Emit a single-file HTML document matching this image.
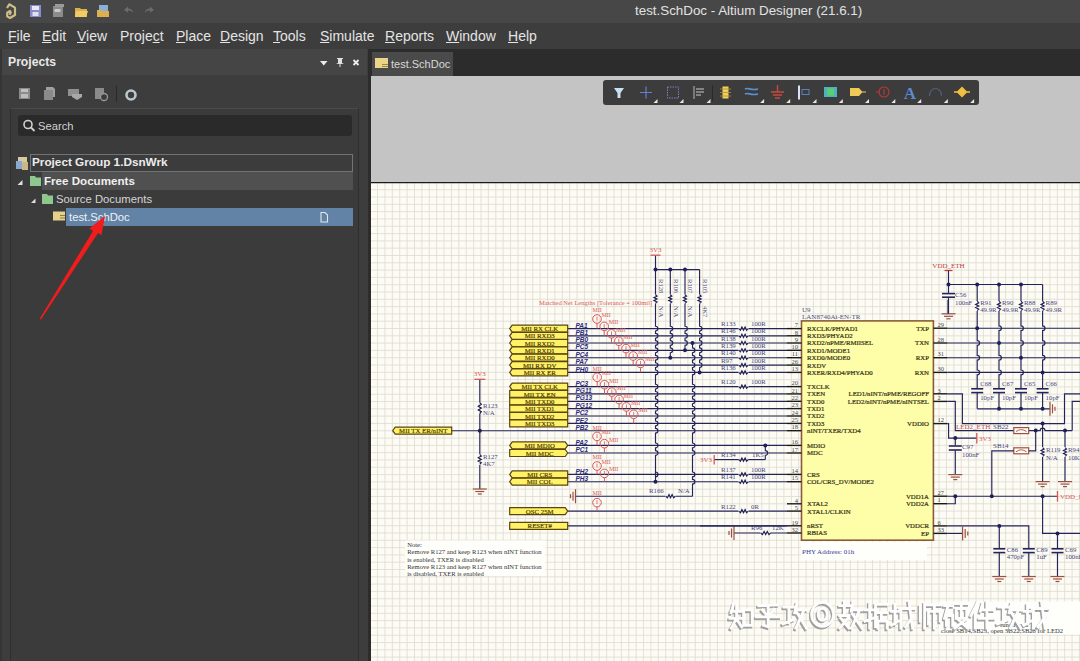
<!DOCTYPE html>
<html><head><meta charset="utf-8"><style>
*{margin:0;padding:0;box-sizing:border-box}
html,body{width:1080px;height:661px;overflow:hidden;background:#2c2c2c;font-family:"Liberation Sans",sans-serif}
.abs{position:absolute}
#title{left:0;top:0;width:1080px;height:23px;background:#474747}
#menu{left:0;top:23px;width:1080px;height:26px;background:#3d3d3d}
.mi{position:absolute;top:4px;font-size:14px;color:#e4e4e4;letter-spacing:0px;white-space:nowrap}
.mi u{text-decoration:underline;text-decoration-thickness:1px;text-underline-offset:0.5px}
#panel{left:0;top:49px;width:368px;height:612px;background:#3d3d3d;border-left:2px solid #353535}
#phead{left:2px;top:49px;width:365px;height:26px;background:#454545}
#ptool{left:2px;top:75px;width:365px;height:33px;background:#3d3d3d}
#tree{left:10px;top:108px;width:349px;height:553px;background:#3b3b3b;border-left:1px solid #2e2e2e;border-right:1px solid #2e2e2e;border-top:1px solid #4a4a4a}
#search{left:18px;top:115px;width:334px;height:21px;background:#2a2a2a;border-radius:3px}
#docarea{left:368px;top:49px;width:712px;height:612px;background:#2c2c2c}
#tab{left:372px;top:52px;width:81px;height:24px;background:#4a4a4a}
#canvas{left:371px;top:76px;width:709px;height:585px;background:#c4c4c4}
#stb{left:603px;top:80px;width:376px;height:25px;background:#3c3c3c;border-radius:3px}
</style></head><body>
<div id="title" class="abs"></div>
<div id="menu" class="abs"></div>
<div id="panel" class="abs"></div>
<div id="phead" class="abs"></div>
<div id="ptool" class="abs"></div>
<div id="tree" class="abs"></div>
<div id="search" class="abs"></div>
<div id="docarea" class="abs"></div>
<div id="tab" class="abs"></div>
<div id="canvas" class="abs"></div>
<div id="stb" class="abs"></div>
<svg class="abs" style="left:0;top:0" width="1080" height="661" viewBox="0 0 1080 661">
<defs><clipPath id="sheet"><rect x="371" y="182" width="709" height="479"/></clipPath></defs>
<g clip-path="url(#sheet)">
<rect x="371" y="182.4" width="709" height="478.6" fill="#fdfcf4"/>
<path d="M377.56,182.4 V661 M384.95,182.4 V661 M392.34,182.4 V661 M399.73,182.4 V661 M407.11,182.4 V661 M414.50,182.4 V661 M421.89,182.4 V661 M429.28,182.4 V661 M436.67,182.4 V661 M444.06,182.4 V661 M451.45,182.4 V661 M458.83,182.4 V661 M466.22,182.4 V661 M473.61,182.4 V661 M481.00,182.4 V661 M488.39,182.4 V661 M495.78,182.4 V661 M503.16,182.4 V661 M510.55,182.4 V661 M517.94,182.4 V661 M525.33,182.4 V661 M532.72,182.4 V661 M540.11,182.4 V661 M547.50,182.4 V661 M554.88,182.4 V661 M562.27,182.4 V661 M569.66,182.4 V661 M577.05,182.4 V661 M584.44,182.4 V661 M591.83,182.4 V661 M599.22,182.4 V661 M606.60,182.4 V661 M613.99,182.4 V661 M621.38,182.4 V661 M628.77,182.4 V661 M636.16,182.4 V661 M643.55,182.4 V661 M650.93,182.4 V661 M658.32,182.4 V661 M665.71,182.4 V661 M673.10,182.4 V661 M680.49,182.4 V661 M687.88,182.4 V661 M695.27,182.4 V661 M702.65,182.4 V661 M710.04,182.4 V661 M717.43,182.4 V661 M724.82,182.4 V661 M732.21,182.4 V661 M739.60,182.4 V661 M746.99,182.4 V661 M754.37,182.4 V661 M761.76,182.4 V661 M769.15,182.4 V661 M776.54,182.4 V661 M783.93,182.4 V661 M791.32,182.4 V661 M798.70,182.4 V661 M806.09,182.4 V661 M813.48,182.4 V661 M820.87,182.4 V661 M828.26,182.4 V661 M835.65,182.4 V661 M843.04,182.4 V661 M850.42,182.4 V661 M857.81,182.4 V661 M865.20,182.4 V661 M872.59,182.4 V661 M879.98,182.4 V661 M887.37,182.4 V661 M894.76,182.4 V661 M902.14,182.4 V661 M909.53,182.4 V661 M916.92,182.4 V661 M924.31,182.4 V661 M931.70,182.4 V661 M939.09,182.4 V661 M946.47,182.4 V661 M953.86,182.4 V661 M961.25,182.4 V661 M968.64,182.4 V661 M976.03,182.4 V661 M983.42,182.4 V661 M990.81,182.4 V661 M998.19,182.4 V661 M1005.58,182.4 V661 M1012.97,182.4 V661 M1020.36,182.4 V661 M1027.75,182.4 V661 M1035.14,182.4 V661 M1042.53,182.4 V661 M1049.91,182.4 V661 M1057.30,182.4 V661 M1064.69,182.4 V661 M1072.08,182.4 V661 M1079.47,182.4 V661 M371,189.75 H1080 M371,197.05 H1080 M371,204.36 H1080 M371,211.66 H1080 M371,218.96 H1080 M371,226.26 H1080 M371,233.57 H1080 M371,240.87 H1080 M371,248.17 H1080 M371,255.48 H1080 M371,262.78 H1080 M371,270.08 H1080 M371,277.39 H1080 M371,284.69 H1080 M371,291.99 H1080 M371,299.29 H1080 M371,306.60 H1080 M371,313.90 H1080 M371,321.20 H1080 M371,328.51 H1080 M371,335.81 H1080 M371,343.11 H1080 M371,350.42 H1080 M371,357.72 H1080 M371,365.02 H1080 M371,372.32 H1080 M371,379.63 H1080 M371,386.93 H1080 M371,394.23 H1080 M371,401.54 H1080 M371,408.84 H1080 M371,416.14 H1080 M371,423.45 H1080 M371,430.75 H1080 M371,438.05 H1080 M371,445.35 H1080 M371,452.66 H1080 M371,459.96 H1080 M371,467.26 H1080 M371,474.57 H1080 M371,481.87 H1080 M371,489.17 H1080 M371,496.48 H1080 M371,503.78 H1080 M371,511.08 H1080 M371,518.38 H1080 M371,525.69 H1080 M371,532.99 H1080 M371,540.29 H1080 M371,547.60 H1080 M371,554.90 H1080 M371,562.20 H1080 M371,569.51 H1080 M371,576.81 H1080 M371,584.11 H1080 M371,591.41 H1080 M371,598.72 H1080 M371,606.02 H1080 M371,613.32 H1080 M371,620.63 H1080 M371,627.93 H1080 M371,635.23 H1080 M371,642.54 H1080 M371,649.84 H1080 M371,657.14 H1080" stroke="#dfdcd2" stroke-width="0.85" fill="none"/>
<rect x="405" y="540.5" width="140.5" height="35.5" fill="#fefefb"/>
<rect x="801" y="542" width="126" height="18" fill="#fefefb"/>
<rect x="939" y="601.5" width="141" height="33" fill="#fefefb"/>
<line x1="371.0" y1="182.4" x2="1080.0" y2="182.4" stroke="#1a1a1a" stroke-width="1.6"/>
<line x1="567.7" y1="328.6" x2="787.0" y2="328.6" stroke="#24245a" stroke-width="1.15"/>
<line x1="567.7" y1="335.8" x2="787.0" y2="335.8" stroke="#24245a" stroke-width="1.15"/>
<line x1="567.7" y1="343.0" x2="787.0" y2="343.0" stroke="#24245a" stroke-width="1.15"/>
<line x1="567.7" y1="350.3" x2="787.0" y2="350.3" stroke="#24245a" stroke-width="1.15"/>
<line x1="567.7" y1="357.7" x2="787.0" y2="357.7" stroke="#24245a" stroke-width="1.15"/>
<line x1="567.7" y1="365.1" x2="787.0" y2="365.1" stroke="#24245a" stroke-width="1.15"/>
<line x1="567.7" y1="372.4" x2="787.0" y2="372.4" stroke="#24245a" stroke-width="1.15"/>
<line x1="567.7" y1="386.6" x2="787.0" y2="386.6" stroke="#24245a" stroke-width="1.15"/>
<line x1="567.7" y1="393.9" x2="787.0" y2="393.9" stroke="#24245a" stroke-width="1.15"/>
<line x1="567.7" y1="401.3" x2="787.0" y2="401.3" stroke="#24245a" stroke-width="1.15"/>
<line x1="567.7" y1="408.6" x2="787.0" y2="408.6" stroke="#24245a" stroke-width="1.15"/>
<line x1="567.7" y1="416.0" x2="787.0" y2="416.0" stroke="#24245a" stroke-width="1.15"/>
<line x1="567.7" y1="423.4" x2="787.0" y2="423.4" stroke="#24245a" stroke-width="1.15"/>
<line x1="567.7" y1="445.4" x2="787.0" y2="445.4" stroke="#24245a" stroke-width="1.15"/>
<line x1="567.7" y1="453.0" x2="787.0" y2="453.0" stroke="#24245a" stroke-width="1.15"/>
<line x1="567.7" y1="474.4" x2="787.0" y2="474.4" stroke="#24245a" stroke-width="1.15"/>
<line x1="567.7" y1="481.7" x2="787.0" y2="481.7" stroke="#24245a" stroke-width="1.15"/>
<line x1="451.7" y1="430.7" x2="787.0" y2="430.7" stroke="#24245a" stroke-width="1.15"/>
<line x1="567.7" y1="511.1" x2="787.0" y2="511.1" stroke="#24245a" stroke-width="1.15"/>
<line x1="567.7" y1="525.8" x2="787.0" y2="525.8" stroke="#24245a" stroke-width="1.15"/>
<line x1="575.5" y1="496.2" x2="692.5" y2="496.2" stroke="#24245a" stroke-width="1.15"/>
<rect x="738.5" y="327.4" width="10" height="2.4" fill="#fdfcf4"/>
<polyline points="738.8,328.6 740.4,330.1 741.9,327.1 743.5,330.1 745.1,327.1 746.6,330.1 748.2,328.6" fill="none" stroke="#24245a" stroke-width="1.25"/>
<text x="721.0" y="326.1" font-family="Liberation Serif" font-size="6.8" fill="#484880" text-anchor="start" font-weight="normal" font-style="normal">R133</text>
<text x="751.0" y="326.1" font-family="Liberation Serif" font-size="6.8" fill="#484880" text-anchor="start" font-weight="normal" font-style="normal">100R</text>
<rect x="738.5" y="334.6" width="10" height="2.4" fill="#fdfcf4"/>
<polyline points="738.8,335.8 740.4,337.3 741.9,334.3 743.5,337.3 745.1,334.3 746.6,337.3 748.2,335.8" fill="none" stroke="#24245a" stroke-width="1.25"/>
<text x="721.0" y="333.3" font-family="Liberation Serif" font-size="6.8" fill="#484880" text-anchor="start" font-weight="normal" font-style="normal">R146</text>
<text x="751.0" y="333.3" font-family="Liberation Serif" font-size="6.8" fill="#484880" text-anchor="start" font-weight="normal" font-style="normal">100R</text>
<rect x="738.5" y="341.8" width="10" height="2.4" fill="#fdfcf4"/>
<polyline points="738.8,343.0 740.4,344.5 741.9,341.5 743.5,344.5 745.1,341.5 746.6,344.5 748.2,343.0" fill="none" stroke="#24245a" stroke-width="1.25"/>
<text x="721.0" y="340.5" font-family="Liberation Serif" font-size="6.8" fill="#484880" text-anchor="start" font-weight="normal" font-style="normal">R138</text>
<text x="751.0" y="340.5" font-family="Liberation Serif" font-size="6.8" fill="#484880" text-anchor="start" font-weight="normal" font-style="normal">100R</text>
<rect x="738.5" y="349.1" width="10" height="2.4" fill="#fdfcf4"/>
<polyline points="738.8,350.3 740.4,351.8 741.9,348.8 743.5,351.8 745.1,348.8 746.6,351.8 748.2,350.3" fill="none" stroke="#24245a" stroke-width="1.25"/>
<text x="721.0" y="347.8" font-family="Liberation Serif" font-size="6.8" fill="#484880" text-anchor="start" font-weight="normal" font-style="normal">R139</text>
<text x="751.0" y="347.8" font-family="Liberation Serif" font-size="6.8" fill="#484880" text-anchor="start" font-weight="normal" font-style="normal">100R</text>
<rect x="738.5" y="356.5" width="10" height="2.4" fill="#fdfcf4"/>
<polyline points="738.8,357.7 740.4,359.2 741.9,356.2 743.5,359.2 745.1,356.2 746.6,359.2 748.2,357.7" fill="none" stroke="#24245a" stroke-width="1.25"/>
<text x="721.0" y="355.2" font-family="Liberation Serif" font-size="6.8" fill="#484880" text-anchor="start" font-weight="normal" font-style="normal">R140</text>
<text x="751.0" y="355.2" font-family="Liberation Serif" font-size="6.8" fill="#484880" text-anchor="start" font-weight="normal" font-style="normal">100R</text>
<rect x="738.5" y="363.9" width="10" height="2.4" fill="#fdfcf4"/>
<polyline points="738.8,365.1 740.4,366.6 741.9,363.6 743.5,366.6 745.1,363.6 746.6,366.6 748.2,365.1" fill="none" stroke="#24245a" stroke-width="1.25"/>
<text x="721.0" y="362.6" font-family="Liberation Serif" font-size="6.8" fill="#484880" text-anchor="start" font-weight="normal" font-style="normal">R97</text>
<text x="751.0" y="362.6" font-family="Liberation Serif" font-size="6.8" fill="#484880" text-anchor="start" font-weight="normal" font-style="normal">100R</text>
<rect x="738.5" y="371.2" width="10" height="2.4" fill="#fdfcf4"/>
<polyline points="738.8,372.4 740.4,373.9 741.9,370.9 743.5,373.9 745.1,370.9 746.6,373.9 748.2,372.4" fill="none" stroke="#24245a" stroke-width="1.25"/>
<text x="721.0" y="369.9" font-family="Liberation Serif" font-size="6.8" fill="#484880" text-anchor="start" font-weight="normal" font-style="normal">R136</text>
<text x="751.0" y="369.9" font-family="Liberation Serif" font-size="6.8" fill="#484880" text-anchor="start" font-weight="normal" font-style="normal">100R</text>
<rect x="738.5" y="385.4" width="10" height="2.4" fill="#fdfcf4"/>
<polyline points="738.8,386.6 740.4,388.1 741.9,385.1 743.5,388.1 745.1,385.1 746.6,388.1 748.2,386.6" fill="none" stroke="#24245a" stroke-width="1.25"/>
<text x="721.0" y="384.1" font-family="Liberation Serif" font-size="6.8" fill="#484880" text-anchor="start" font-weight="normal" font-style="normal">R120</text>
<text x="751.0" y="384.1" font-family="Liberation Serif" font-size="6.8" fill="#484880" text-anchor="start" font-weight="normal" font-style="normal">100R</text>
<rect x="738.5" y="473.2" width="10" height="2.4" fill="#fdfcf4"/>
<polyline points="738.8,474.4 740.4,475.9 741.9,472.9 743.5,475.9 745.1,472.9 746.6,475.9 748.2,474.4" fill="none" stroke="#24245a" stroke-width="1.25"/>
<text x="721.0" y="471.9" font-family="Liberation Serif" font-size="6.8" fill="#484880" text-anchor="start" font-weight="normal" font-style="normal">R137</text>
<text x="751.0" y="471.9" font-family="Liberation Serif" font-size="6.8" fill="#484880" text-anchor="start" font-weight="normal" font-style="normal">100R</text>
<rect x="738.5" y="480.5" width="10" height="2.4" fill="#fdfcf4"/>
<polyline points="738.8,481.7 740.4,483.2 741.9,480.2 743.5,483.2 745.1,480.2 746.6,483.2 748.2,481.7" fill="none" stroke="#24245a" stroke-width="1.25"/>
<text x="721.0" y="479.2" font-family="Liberation Serif" font-size="6.8" fill="#484880" text-anchor="start" font-weight="normal" font-style="normal">R141</text>
<text x="751.0" y="479.2" font-family="Liberation Serif" font-size="6.8" fill="#484880" text-anchor="start" font-weight="normal" font-style="normal">100R</text>
<rect x="738.5" y="509.9" width="10" height="2.4" fill="#fdfcf4"/>
<polyline points="738.8,511.1 740.4,512.6 741.9,509.6 743.5,512.6 745.1,509.6 746.6,512.6 748.2,511.1" fill="none" stroke="#24245a" stroke-width="1.25"/>
<text x="721.0" y="508.6" font-family="Liberation Serif" font-size="6.8" fill="#484880" text-anchor="start" font-weight="normal" font-style="normal">R122</text>
<text x="751.0" y="508.6" font-family="Liberation Serif" font-size="6.8" fill="#484880" text-anchor="start" font-weight="normal" font-style="normal">0R</text>
<rect x="665.5" y="495.0" width="10" height="2.4" fill="#fdfcf4"/>
<polyline points="665.8,496.2 667.4,497.7 669.0,494.7 670.5,497.7 672.1,494.7 673.7,497.7 675.3,496.2" fill="none" stroke="#24245a" stroke-width="1.25"/>
<text x="649.0" y="493.2" font-family="Liberation Serif" font-size="6.8" fill="#484880" text-anchor="start" font-weight="normal" font-style="normal">R166</text>
<text x="678.0" y="493.2" font-family="Liberation Serif" font-size="6.8" fill="#484880" text-anchor="start" font-weight="normal" font-style="normal">N/A</text>
<line x1="575.5" y1="489.2" x2="575.5" y2="503.2" stroke="#9a5040" stroke-width="1.2"/>
<line x1="573.0" y1="491.7" x2="573.0" y2="500.7" stroke="#9a5040" stroke-width="1.2"/>
<line x1="570.5" y1="494.2" x2="570.5" y2="498.2" stroke="#9a5040" stroke-width="1.2"/>
<polyline points="714.2,459.6 738.8,459.6" fill="none" stroke="#24245a" stroke-width="1.15"/>
<polyline points="738.8,459.6 740.4,461.1 741.9,458.1 743.5,461.1 745.1,458.1 746.6,461.1 748.2,459.6" fill="none" stroke="#24245a" stroke-width="1.25"/>
<polyline points="748.2,459.6 765.3,459.6" fill="none" stroke="#24245a" stroke-width="1.15"/>
<path d="M765.3,445.4 L765.3,450.6 A2.4,2.4 0 0 1 765.3,455.4 L765.3,459.6" fill="none" stroke="#24245a" stroke-width="1.15"/>
<circle cx="765.3" cy="445.4" r="2.0" fill="#1e1e5a"/>
<text x="721.0" y="457.0" font-family="Liberation Serif" font-size="6.8" fill="#484880" text-anchor="start" font-weight="normal" font-style="normal">R134</text>
<text x="752.0" y="457.0" font-family="Liberation Serif" font-size="6.8" fill="#484880" text-anchor="start" font-weight="normal" font-style="normal">1K5</text>
<line x1="714.2" y1="455.0" x2="714.2" y2="464.5" stroke="#d85858" stroke-width="1.3"/>
<text x="712.0" y="462.3" font-family="Liberation Serif" font-size="7" fill="#d85858" text-anchor="end" font-weight="normal" font-style="normal">3V3</text>
<line x1="734.0" y1="533.0" x2="787.0" y2="533.0" stroke="#24245a" stroke-width="1.15"/>
<rect x="760.5" y="531.8" width="10" height="2.4" fill="#fdfcf4"/>
<polyline points="760.8,533.0 762.4,534.5 764.1,531.5 765.7,534.5 767.3,531.5 769.0,534.5 770.6,533.0" fill="none" stroke="#24245a" stroke-width="1.25"/>
<text x="751.0" y="530.0" font-family="Liberation Serif" font-size="6.8" fill="#484880" text-anchor="start" font-weight="normal" font-style="normal">R96</text>
<text x="772.0" y="530.0" font-family="Liberation Serif" font-size="6.8" fill="#484880" text-anchor="start" font-weight="normal" font-style="normal">12K</text>
<line x1="734.0" y1="526.0" x2="734.0" y2="540.0" stroke="#9a5040" stroke-width="1.2"/>
<line x1="731.5" y1="528.5" x2="731.5" y2="537.5" stroke="#9a5040" stroke-width="1.2"/>
<line x1="729.0" y1="531.0" x2="729.0" y2="535.0" stroke="#9a5040" stroke-width="1.2"/>
<line x1="700.0" y1="525.8" x2="787.0" y2="525.8" stroke="#24245a" stroke-width="1.15"/>
<path d="M655.5,255.2 L655.5,326.2 A2.4,2.4 0 0 1 655.5,331.0 L655.5,333.4 A2.4,2.4 0 0 1 655.5,338.2 L655.5,340.6 A2.4,2.4 0 0 1 655.5,345.4 L655.5,347.9 A2.4,2.4 0 0 1 655.5,352.7 L655.5,355.3 A2.4,2.4 0 0 1 655.5,360.1 L655.5,362.7 A2.4,2.4 0 0 1 655.5,367.5 L655.5,370.0 A2.4,2.4 0 0 1 655.5,374.8 L655.5,384.2 A2.4,2.4 0 0 1 655.5,389.0 L655.5,391.5 A2.4,2.4 0 0 1 655.5,396.3 L655.5,398.9 A2.4,2.4 0 0 1 655.5,403.7 L655.5,406.2 A2.4,2.4 0 0 1 655.5,411.0 L655.5,413.6 A2.4,2.4 0 0 1 655.5,418.4 L655.5,421.0 A2.4,2.4 0 0 1 655.5,425.8 L655.5,428.3 A2.4,2.4 0 0 1 655.5,433.1 L655.5,443.0 A2.4,2.4 0 0 1 655.5,447.8 L655.5,450.6 A2.4,2.4 0 0 1 655.5,455.4 L655.5,472.0 A2.4,2.4 0 0 1 655.5,476.8 L655.5,472.0 A2.4,2.4 0 0 1 655.5,476.8 L655.5,481.7" fill="none" stroke="#24245a" stroke-width="1.15"/>
<circle cx="655.5" cy="269.6" r="2.0" fill="#1e1e5a"/>
<circle cx="655.5" cy="481.7" r="2.0" fill="#1e1e5a"/>
<line x1="655.5" y1="269.6" x2="699.6" y2="269.6" stroke="#24245a" stroke-width="1.15"/>
<path d="M670.3,269.6 L670.3,326.2 A2.4,2.4 0 0 1 670.3,331.0 L670.3,333.4 A2.4,2.4 0 0 1 670.3,338.2 L670.3,340.6 A2.4,2.4 0 0 1 670.3,345.4 L670.3,347.9 A2.4,2.4 0 0 1 670.3,352.7 L670.3,357.7" fill="none" stroke="#24245a" stroke-width="1.15"/>
<circle cx="670.3" cy="269.6" r="2.0" fill="#1e1e5a"/>
<circle cx="670.3" cy="357.7" r="2.0" fill="#1e1e5a"/>
<path d="M685.0,269.6 L685.0,326.2 A2.4,2.4 0 0 1 685.0,331.0 L685.0,333.4 A2.4,2.4 0 0 1 685.0,338.2 L685.0,340.6 A2.4,2.4 0 0 1 685.0,345.4 L685.0,350.3" fill="none" stroke="#24245a" stroke-width="1.15"/>
<circle cx="685.0" cy="269.6" r="2.0" fill="#1e1e5a"/>
<circle cx="685.0" cy="350.3" r="2.0" fill="#1e1e5a"/>
<path d="M699.6,269.6 L699.6,326.2 A2.4,2.4 0 0 1 699.6,331.0 L699.6,333.4 A2.4,2.4 0 0 1 699.6,338.2 L699.6,340.6 A2.4,2.4 0 0 1 699.6,345.4 L699.6,347.9 A2.4,2.4 0 0 1 699.6,352.7 L699.6,355.3 A2.4,2.4 0 0 1 699.6,360.1 L699.6,362.7 A2.4,2.4 0 0 1 699.6,367.5 L699.6,372.4" fill="none" stroke="#24245a" stroke-width="1.15"/>
<circle cx="699.6" cy="372.4" r="2.0" fill="#1e1e5a"/>
<path d="M692.5,343.0 L692.5,347.9 A2.4,2.4 0 0 1 692.5,352.7 L692.5,355.3 A2.4,2.4 0 0 1 692.5,360.1 L692.5,362.7 A2.4,2.4 0 0 1 692.5,367.5 L692.5,370.0 A2.4,2.4 0 0 1 692.5,374.8 L692.5,384.2 A2.4,2.4 0 0 1 692.5,389.0 L692.5,391.5 A2.4,2.4 0 0 1 692.5,396.3 L692.5,398.9 A2.4,2.4 0 0 1 692.5,403.7 L692.5,406.2 A2.4,2.4 0 0 1 692.5,411.0 L692.5,413.6 A2.4,2.4 0 0 1 692.5,418.4 L692.5,421.0 A2.4,2.4 0 0 1 692.5,425.8 L692.5,428.3 A2.4,2.4 0 0 1 692.5,433.1 L692.5,443.0 A2.4,2.4 0 0 1 692.5,447.8 L692.5,450.6 A2.4,2.4 0 0 1 692.5,455.4 L692.5,472.0 A2.4,2.4 0 0 1 692.5,476.8 L692.5,479.3 A2.4,2.4 0 0 1 692.5,484.1 L692.5,496.2" fill="none" stroke="#24245a" stroke-width="1.15"/>
<circle cx="692.5" cy="343.0" r="2.0" fill="#1e1e5a"/>
<rect x="652.5" y="294.5" width="6" height="9" fill="#fdfcf4"/>
<polyline points="655.5,294.8 657.0,296.2 654.0,297.6 657.0,299.1 654.0,300.5 657.0,301.9 655.5,303.3" fill="none" stroke="#24245a" stroke-width="1.25"/>
<text x="658.7" y="279.0" font-family="Liberation Serif" font-size="6.6" fill="#484880" text-anchor="start" font-weight="normal" font-style="normal" transform="rotate(90 658.7 279.0)">R128</text>
<text x="658.7" y="306.0" font-family="Liberation Serif" font-size="6.6" fill="#484880" text-anchor="start" font-weight="normal" font-style="normal" transform="rotate(90 658.7 306.0)">N/A</text>
<rect x="667.3" y="294.5" width="6" height="9" fill="#fdfcf4"/>
<polyline points="670.3,294.8 671.8,296.2 668.8,297.6 671.8,299.1 668.8,300.5 671.8,301.9 670.3,303.3" fill="none" stroke="#24245a" stroke-width="1.25"/>
<text x="673.5" y="279.0" font-family="Liberation Serif" font-size="6.6" fill="#484880" text-anchor="start" font-weight="normal" font-style="normal" transform="rotate(90 673.5 279.0)">R106</text>
<text x="673.5" y="306.0" font-family="Liberation Serif" font-size="6.6" fill="#484880" text-anchor="start" font-weight="normal" font-style="normal" transform="rotate(90 673.5 306.0)">N/A</text>
<rect x="682.0" y="294.5" width="6" height="9" fill="#fdfcf4"/>
<polyline points="685.0,294.8 686.5,296.2 683.5,297.6 686.5,299.1 683.5,300.5 686.5,301.9 685.0,303.3" fill="none" stroke="#24245a" stroke-width="1.25"/>
<text x="688.2" y="279.0" font-family="Liberation Serif" font-size="6.6" fill="#484880" text-anchor="start" font-weight="normal" font-style="normal" transform="rotate(90 688.2 279.0)">R107</text>
<text x="688.2" y="306.0" font-family="Liberation Serif" font-size="6.6" fill="#484880" text-anchor="start" font-weight="normal" font-style="normal" transform="rotate(90 688.2 306.0)">N/A</text>
<rect x="696.6" y="294.5" width="6" height="9" fill="#fdfcf4"/>
<polyline points="699.6,294.8 701.1,296.2 698.1,297.6 701.1,299.1 698.1,300.5 701.1,301.9 699.6,303.3" fill="none" stroke="#24245a" stroke-width="1.25"/>
<text x="702.8" y="279.0" font-family="Liberation Serif" font-size="6.6" fill="#484880" text-anchor="start" font-weight="normal" font-style="normal" transform="rotate(90 702.8 279.0)">R105</text>
<text x="702.8" y="306.0" font-family="Liberation Serif" font-size="6.6" fill="#484880" text-anchor="start" font-weight="normal" font-style="normal" transform="rotate(90 702.8 306.0)">4K7</text>
<line x1="650.5" y1="255.2" x2="660.5" y2="255.2" stroke="#d85858" stroke-width="1.3"/>
<text x="655.5" y="252.2" font-family="Liberation Serif" font-size="7" fill="#d85858" text-anchor="middle" font-weight="normal" font-style="normal">3V3</text>
<text x="539.0" y="304.5" font-family="Liberation Serif" font-size="6.5" fill="#d85858" text-anchor="start" font-weight="normal" font-style="normal">Matched Net Lengths [Tolerance = 100mil]</text>
<text x="592.5" y="311.5" font-family="Liberation Serif" font-size="6" fill="#d85858" text-anchor="start" font-weight="normal" font-style="normal">MII</text>
<circle cx="597.0" cy="319.0" r="4.3" fill="none" stroke="#d85858" stroke-width="1.0"/>
<line x1="597.0" y1="316.5" x2="597.0" y2="320.5" stroke="#d85858" stroke-width="0.8"/>
<line x1="597.0" y1="323.1" x2="597.0" y2="328.6" stroke="#d85858" stroke-width="1.0"/>
<text x="601.5" y="317.0" font-family="Liberation Serif" font-size="6" fill="#d85858" text-anchor="start" font-weight="normal" font-style="normal">MII</text>
<circle cx="604.2" cy="326.4" r="4.3" fill="none" stroke="#d85858" stroke-width="1.0"/>
<line x1="604.2" y1="323.9" x2="604.2" y2="327.9" stroke="#d85858" stroke-width="0.8"/>
<line x1="604.2" y1="330.5" x2="604.2" y2="335.8" stroke="#d85858" stroke-width="1.0"/>
<text x="608.8" y="324.4" font-family="Liberation Serif" font-size="6" fill="#d85858" text-anchor="start" font-weight="normal" font-style="normal">MII</text>
<circle cx="611.5" cy="333.8" r="4.3" fill="none" stroke="#d85858" stroke-width="1.0"/>
<line x1="611.5" y1="331.3" x2="611.5" y2="335.3" stroke="#d85858" stroke-width="0.8"/>
<line x1="611.5" y1="337.9" x2="611.5" y2="343.0" stroke="#d85858" stroke-width="1.0"/>
<text x="616.0" y="331.8" font-family="Liberation Serif" font-size="6" fill="#d85858" text-anchor="start" font-weight="normal" font-style="normal">MII</text>
<circle cx="618.8" cy="341.2" r="4.3" fill="none" stroke="#d85858" stroke-width="1.0"/>
<line x1="618.8" y1="338.7" x2="618.8" y2="342.7" stroke="#d85858" stroke-width="0.8"/>
<line x1="618.8" y1="345.3" x2="618.8" y2="350.3" stroke="#d85858" stroke-width="1.0"/>
<text x="623.2" y="339.2" font-family="Liberation Serif" font-size="6" fill="#d85858" text-anchor="start" font-weight="normal" font-style="normal">MII</text>
<circle cx="626.0" cy="348.6" r="4.3" fill="none" stroke="#d85858" stroke-width="1.0"/>
<line x1="626.0" y1="346.1" x2="626.0" y2="350.1" stroke="#d85858" stroke-width="0.8"/>
<line x1="626.0" y1="352.7" x2="626.0" y2="357.7" stroke="#d85858" stroke-width="1.0"/>
<text x="630.5" y="346.6" font-family="Liberation Serif" font-size="6" fill="#d85858" text-anchor="start" font-weight="normal" font-style="normal">MII</text>
<circle cx="633.2" cy="356.0" r="4.3" fill="none" stroke="#d85858" stroke-width="1.0"/>
<line x1="633.2" y1="353.5" x2="633.2" y2="357.5" stroke="#d85858" stroke-width="0.8"/>
<line x1="633.2" y1="360.1" x2="633.2" y2="365.1" stroke="#d85858" stroke-width="1.0"/>
<text x="637.8" y="354.0" font-family="Liberation Serif" font-size="6" fill="#d85858" text-anchor="start" font-weight="normal" font-style="normal">MII</text>
<circle cx="640.5" cy="363.4" r="4.3" fill="none" stroke="#d85858" stroke-width="1.0"/>
<line x1="640.5" y1="360.9" x2="640.5" y2="364.9" stroke="#d85858" stroke-width="0.8"/>
<line x1="640.5" y1="367.5" x2="640.5" y2="372.4" stroke="#d85858" stroke-width="1.0"/>
<text x="645.0" y="361.4" font-family="Liberation Serif" font-size="6" fill="#d85858" text-anchor="start" font-weight="normal" font-style="normal">MII</text>
<text x="592.5" y="370.5" font-family="Liberation Serif" font-size="6" fill="#d85858" text-anchor="start" font-weight="normal" font-style="normal">MII</text>
<circle cx="597.2" cy="377.3" r="4.3" fill="none" stroke="#d85858" stroke-width="1.0"/>
<line x1="597.2" y1="374.8" x2="597.2" y2="378.8" stroke="#d85858" stroke-width="0.8"/>
<line x1="597.2" y1="381.4" x2="597.2" y2="386.6" stroke="#d85858" stroke-width="1.0"/>
<text x="601.7" y="375.3" font-family="Liberation Serif" font-size="6" fill="#d85858" text-anchor="start" font-weight="normal" font-style="normal">MII</text>
<circle cx="604.5" cy="384.7" r="4.3" fill="none" stroke="#d85858" stroke-width="1.0"/>
<line x1="604.5" y1="382.2" x2="604.5" y2="386.2" stroke="#d85858" stroke-width="0.8"/>
<line x1="604.5" y1="388.8" x2="604.5" y2="393.9" stroke="#d85858" stroke-width="1.0"/>
<text x="609.0" y="382.7" font-family="Liberation Serif" font-size="6" fill="#d85858" text-anchor="start" font-weight="normal" font-style="normal">MII</text>
<circle cx="611.8" cy="392.1" r="4.3" fill="none" stroke="#d85858" stroke-width="1.0"/>
<line x1="611.8" y1="389.6" x2="611.8" y2="393.6" stroke="#d85858" stroke-width="0.8"/>
<line x1="611.8" y1="396.2" x2="611.8" y2="401.3" stroke="#d85858" stroke-width="1.0"/>
<text x="616.3" y="390.1" font-family="Liberation Serif" font-size="6" fill="#d85858" text-anchor="start" font-weight="normal" font-style="normal">MII</text>
<circle cx="619.1" cy="399.5" r="4.3" fill="none" stroke="#d85858" stroke-width="1.0"/>
<line x1="619.1" y1="397.0" x2="619.1" y2="401.0" stroke="#d85858" stroke-width="0.8"/>
<line x1="619.1" y1="403.6" x2="619.1" y2="408.6" stroke="#d85858" stroke-width="1.0"/>
<text x="623.6" y="397.5" font-family="Liberation Serif" font-size="6" fill="#d85858" text-anchor="start" font-weight="normal" font-style="normal">MII</text>
<circle cx="626.4" cy="406.9" r="4.3" fill="none" stroke="#d85858" stroke-width="1.0"/>
<line x1="626.4" y1="404.4" x2="626.4" y2="408.4" stroke="#d85858" stroke-width="0.8"/>
<line x1="626.4" y1="411.0" x2="626.4" y2="416.0" stroke="#d85858" stroke-width="1.0"/>
<text x="630.9" y="404.9" font-family="Liberation Serif" font-size="6" fill="#d85858" text-anchor="start" font-weight="normal" font-style="normal">MII</text>
<circle cx="633.7" cy="414.3" r="4.3" fill="none" stroke="#d85858" stroke-width="1.0"/>
<line x1="633.7" y1="411.8" x2="633.7" y2="415.8" stroke="#d85858" stroke-width="0.8"/>
<line x1="633.7" y1="418.4" x2="633.7" y2="423.4" stroke="#d85858" stroke-width="1.0"/>
<text x="638.2" y="412.3" font-family="Liberation Serif" font-size="6" fill="#d85858" text-anchor="start" font-weight="normal" font-style="normal">MII</text>
<text x="592.5" y="429.5" font-family="Liberation Serif" font-size="6" fill="#d85858" text-anchor="start" font-weight="normal" font-style="normal">MII</text>
<circle cx="597.0" cy="436.4" r="4.3" fill="none" stroke="#d85858" stroke-width="1.0"/>
<line x1="597.0" y1="433.9" x2="597.0" y2="437.9" stroke="#d85858" stroke-width="0.8"/>
<line x1="597.0" y1="440.5" x2="597.0" y2="445.4" stroke="#d85858" stroke-width="1.0"/>
<text x="601.5" y="434.4" font-family="Liberation Serif" font-size="6" fill="#d85858" text-anchor="start" font-weight="normal" font-style="normal">MII</text>
<circle cx="604.4" cy="443.7" r="4.3" fill="none" stroke="#d85858" stroke-width="1.0"/>
<line x1="604.4" y1="441.2" x2="604.4" y2="445.2" stroke="#d85858" stroke-width="0.8"/>
<line x1="604.4" y1="447.8" x2="604.4" y2="453.0" stroke="#d85858" stroke-width="1.0"/>
<text x="608.9" y="441.7" font-family="Liberation Serif" font-size="6" fill="#d85858" text-anchor="start" font-weight="normal" font-style="normal">MII</text>
<text x="592.5" y="459.0" font-family="Liberation Serif" font-size="6" fill="#d85858" text-anchor="start" font-weight="normal" font-style="normal">MII</text>
<circle cx="597.0" cy="466.0" r="4.3" fill="none" stroke="#d85858" stroke-width="1.0"/>
<line x1="597.0" y1="463.5" x2="597.0" y2="467.5" stroke="#d85858" stroke-width="0.8"/>
<line x1="597.0" y1="470.1" x2="597.0" y2="474.4" stroke="#d85858" stroke-width="1.0"/>
<text x="601.5" y="464.0" font-family="Liberation Serif" font-size="6" fill="#d85858" text-anchor="start" font-weight="normal" font-style="normal">MII</text>
<circle cx="604.4" cy="473.4" r="4.3" fill="none" stroke="#d85858" stroke-width="1.0"/>
<line x1="604.4" y1="470.9" x2="604.4" y2="474.9" stroke="#d85858" stroke-width="0.8"/>
<line x1="604.4" y1="477.5" x2="604.4" y2="481.7" stroke="#d85858" stroke-width="1.0"/>
<text x="608.9" y="471.4" font-family="Liberation Serif" font-size="6" fill="#d85858" text-anchor="start" font-weight="normal" font-style="normal">MII</text>
<text x="592.5" y="494.5" font-family="Liberation Serif" font-size="6" fill="#d85858" text-anchor="start" font-weight="normal" font-style="normal">MII</text>
<circle cx="597.0" cy="502.6" r="4.3" fill="none" stroke="#d85858" stroke-width="1.0"/>
<line x1="597.0" y1="500.1" x2="597.0" y2="504.1" stroke="#d85858" stroke-width="0.8"/>
<line x1="597.0" y1="506.7" x2="597.0" y2="511.1" stroke="#d85858" stroke-width="1.0"/>
<text x="575.5" y="327.7" font-family="Liberation Sans" font-size="6.5" fill="#2c2c80" text-anchor="start" font-weight="bold" font-style="italic">PA1</text>
<text x="575.5" y="334.9" font-family="Liberation Sans" font-size="6.5" fill="#2c2c80" text-anchor="start" font-weight="bold" font-style="italic">PB1</text>
<text x="575.5" y="342.1" font-family="Liberation Sans" font-size="6.5" fill="#2c2c80" text-anchor="start" font-weight="bold" font-style="italic">PB0</text>
<text x="575.5" y="349.4" font-family="Liberation Sans" font-size="6.5" fill="#2c2c80" text-anchor="start" font-weight="bold" font-style="italic">PC5</text>
<text x="575.5" y="356.8" font-family="Liberation Sans" font-size="6.5" fill="#2c2c80" text-anchor="start" font-weight="bold" font-style="italic">PC4</text>
<text x="575.5" y="364.2" font-family="Liberation Sans" font-size="6.5" fill="#2c2c80" text-anchor="start" font-weight="bold" font-style="italic">PA7</text>
<text x="575.5" y="371.5" font-family="Liberation Sans" font-size="6.5" fill="#2c2c80" text-anchor="start" font-weight="bold" font-style="italic">PH0</text>
<text x="575.5" y="385.7" font-family="Liberation Sans" font-size="6.5" fill="#2c2c80" text-anchor="start" font-weight="bold" font-style="italic">PC3</text>
<text x="575.5" y="393.0" font-family="Liberation Sans" font-size="6.5" fill="#2c2c80" text-anchor="start" font-weight="bold" font-style="italic">PG11</text>
<text x="575.5" y="400.4" font-family="Liberation Sans" font-size="6.5" fill="#2c2c80" text-anchor="start" font-weight="bold" font-style="italic">PG13</text>
<text x="575.5" y="407.7" font-family="Liberation Sans" font-size="6.5" fill="#2c2c80" text-anchor="start" font-weight="bold" font-style="italic">PG12</text>
<text x="575.5" y="415.1" font-family="Liberation Sans" font-size="6.5" fill="#2c2c80" text-anchor="start" font-weight="bold" font-style="italic">PC2</text>
<text x="575.5" y="422.5" font-family="Liberation Sans" font-size="6.5" fill="#2c2c80" text-anchor="start" font-weight="bold" font-style="italic">PE2</text>
<text x="575.5" y="429.8" font-family="Liberation Sans" font-size="6.5" fill="#2c2c80" text-anchor="start" font-weight="bold" font-style="italic">PB2</text>
<text x="575.5" y="444.5" font-family="Liberation Sans" font-size="6.5" fill="#2c2c80" text-anchor="start" font-weight="bold" font-style="italic">PA2</text>
<text x="575.5" y="452.1" font-family="Liberation Sans" font-size="6.5" fill="#2c2c80" text-anchor="start" font-weight="bold" font-style="italic">PC1</text>
<text x="575.5" y="473.5" font-family="Liberation Sans" font-size="6.5" fill="#2c2c80" text-anchor="start" font-weight="bold" font-style="italic">PH2</text>
<text x="575.5" y="480.8" font-family="Liberation Sans" font-size="6.5" fill="#2c2c80" text-anchor="start" font-weight="bold" font-style="italic">PH3</text>
<polygon points="512.2,325.1 567.7,325.1 567.7,328.6 567.7,332.1 512.2,332.1 509.7,328.6" fill="#fff266" stroke="#5a4410" stroke-width="1.2"/>
<text x="539.7" y="331.2" font-family="Liberation Serif" font-size="6.8" fill="#4e3c08" text-anchor="middle" font-weight="normal" font-style="normal" stroke="#4e3c08" stroke-width="0.2">MII RX CLK</text>
<polygon points="512.2,332.3 567.7,332.3 567.7,335.8 567.7,339.3 512.2,339.3 509.7,335.8" fill="#fff266" stroke="#5a4410" stroke-width="1.2"/>
<text x="539.7" y="338.4" font-family="Liberation Serif" font-size="6.8" fill="#4e3c08" text-anchor="middle" font-weight="normal" font-style="normal" stroke="#4e3c08" stroke-width="0.2">MII RXD3</text>
<polygon points="512.2,339.5 567.7,339.5 567.7,343.0 567.7,346.5 512.2,346.5 509.7,343.0" fill="#fff266" stroke="#5a4410" stroke-width="1.2"/>
<text x="539.7" y="345.6" font-family="Liberation Serif" font-size="6.8" fill="#4e3c08" text-anchor="middle" font-weight="normal" font-style="normal" stroke="#4e3c08" stroke-width="0.2">MII RXD2</text>
<polygon points="512.2,346.8 567.7,346.8 567.7,350.3 567.7,353.8 512.2,353.8 509.7,350.3" fill="#fff266" stroke="#5a4410" stroke-width="1.2"/>
<text x="539.7" y="352.9" font-family="Liberation Serif" font-size="6.8" fill="#4e3c08" text-anchor="middle" font-weight="normal" font-style="normal" stroke="#4e3c08" stroke-width="0.2">MII RXD1</text>
<polygon points="512.2,354.2 567.7,354.2 567.7,357.7 567.7,361.2 512.2,361.2 509.7,357.7" fill="#fff266" stroke="#5a4410" stroke-width="1.2"/>
<text x="539.7" y="360.3" font-family="Liberation Serif" font-size="6.8" fill="#4e3c08" text-anchor="middle" font-weight="normal" font-style="normal" stroke="#4e3c08" stroke-width="0.2">MII RXD0</text>
<polygon points="512.2,361.6 567.7,361.6 567.7,365.1 567.7,368.6 512.2,368.6 509.7,365.1" fill="#fff266" stroke="#5a4410" stroke-width="1.2"/>
<text x="539.7" y="367.7" font-family="Liberation Serif" font-size="6.8" fill="#4e3c08" text-anchor="middle" font-weight="normal" font-style="normal" stroke="#4e3c08" stroke-width="0.2">MII RX DV</text>
<polygon points="512.2,368.9 567.7,368.9 567.7,372.4 567.7,375.9 512.2,375.9 509.7,372.4" fill="#fff266" stroke="#5a4410" stroke-width="1.2"/>
<text x="539.7" y="375.0" font-family="Liberation Serif" font-size="6.8" fill="#4e3c08" text-anchor="middle" font-weight="normal" font-style="normal" stroke="#4e3c08" stroke-width="0.2">MII RX ER</text>
<polygon points="512.2,383.1 567.7,383.1 567.7,386.6 567.7,390.1 512.2,390.1 509.7,386.6" fill="#fff266" stroke="#5a4410" stroke-width="1.2"/>
<text x="539.7" y="389.2" font-family="Liberation Serif" font-size="6.8" fill="#4e3c08" text-anchor="middle" font-weight="normal" font-style="normal" stroke="#4e3c08" stroke-width="0.2">MII TX CLK</text>
<polygon points="509.7,390.4 567.7,390.4 567.7,393.9 567.7,397.4 509.7,397.4 509.7,393.9" fill="#fff266" stroke="#5a4410" stroke-width="1.2"/>
<text x="539.7" y="396.5" font-family="Liberation Serif" font-size="6.8" fill="#4e3c08" text-anchor="middle" font-weight="normal" font-style="normal" stroke="#4e3c08" stroke-width="0.2">MII TX EN</text>
<polygon points="509.7,397.8 567.7,397.8 567.7,401.3 567.7,404.8 509.7,404.8 509.7,401.3" fill="#fff266" stroke="#5a4410" stroke-width="1.2"/>
<text x="539.7" y="403.9" font-family="Liberation Serif" font-size="6.8" fill="#4e3c08" text-anchor="middle" font-weight="normal" font-style="normal" stroke="#4e3c08" stroke-width="0.2">MII TXD0</text>
<polygon points="509.7,405.1 567.7,405.1 567.7,408.6 567.7,412.1 509.7,412.1 509.7,408.6" fill="#fff266" stroke="#5a4410" stroke-width="1.2"/>
<text x="539.7" y="411.2" font-family="Liberation Serif" font-size="6.8" fill="#4e3c08" text-anchor="middle" font-weight="normal" font-style="normal" stroke="#4e3c08" stroke-width="0.2">MII TXD1</text>
<polygon points="509.7,412.5 567.7,412.5 567.7,416.0 567.7,419.5 509.7,419.5 509.7,416.0" fill="#fff266" stroke="#5a4410" stroke-width="1.2"/>
<text x="539.7" y="418.6" font-family="Liberation Serif" font-size="6.8" fill="#4e3c08" text-anchor="middle" font-weight="normal" font-style="normal" stroke="#4e3c08" stroke-width="0.2">MII TXD2</text>
<polygon points="509.7,419.9 567.7,419.9 567.7,423.4 567.7,426.9 509.7,426.9 509.7,423.4" fill="#fff266" stroke="#5a4410" stroke-width="1.2"/>
<text x="539.7" y="426.0" font-family="Liberation Serif" font-size="6.8" fill="#4e3c08" text-anchor="middle" font-weight="normal" font-style="normal" stroke="#4e3c08" stroke-width="0.2">MII TXD3</text>
<polygon points="512.2,441.9 565.2,441.9 567.7,445.4 565.2,448.9 512.2,448.9 509.7,445.4" fill="#fff266" stroke="#5a4410" stroke-width="1.2"/>
<text x="539.7" y="448.0" font-family="Liberation Serif" font-size="6.8" fill="#4e3c08" text-anchor="middle" font-weight="normal" font-style="normal" stroke="#4e3c08" stroke-width="0.2">MII MDIO</text>
<polygon points="509.7,449.5 565.2,449.5 567.7,453.0 565.2,456.5 509.7,456.5 509.7,453.0" fill="#fff266" stroke="#5a4410" stroke-width="1.2"/>
<text x="539.7" y="455.6" font-family="Liberation Serif" font-size="6.8" fill="#4e3c08" text-anchor="middle" font-weight="normal" font-style="normal" stroke="#4e3c08" stroke-width="0.2">MII MDC</text>
<polygon points="512.2,470.9 567.7,470.9 567.7,474.4 567.7,477.9 512.2,477.9 509.7,474.4" fill="#fff266" stroke="#5a4410" stroke-width="1.2"/>
<text x="539.7" y="477.0" font-family="Liberation Serif" font-size="6.8" fill="#4e3c08" text-anchor="middle" font-weight="normal" font-style="normal" stroke="#4e3c08" stroke-width="0.2">MII CRS</text>
<polygon points="512.2,478.2 567.7,478.2 567.7,481.7 567.7,485.2 512.2,485.2 509.7,481.7" fill="#fff266" stroke="#5a4410" stroke-width="1.2"/>
<text x="539.7" y="484.3" font-family="Liberation Serif" font-size="6.8" fill="#4e3c08" text-anchor="middle" font-weight="normal" font-style="normal" stroke="#4e3c08" stroke-width="0.2">MII COL</text>
<polygon points="509.7,507.6 565.2,507.6 567.7,511.1 565.2,514.6 509.7,514.6 509.7,511.1" fill="#fff266" stroke="#5a4410" stroke-width="1.2"/>
<text x="539.7" y="513.7" font-family="Liberation Serif" font-size="6.8" fill="#4e3c08" text-anchor="middle" font-weight="normal" font-style="normal" stroke="#4e3c08" stroke-width="0.2">OSC 25M</text>
<polygon points="509.7,522.3 567.7,522.3 567.7,525.8 567.7,529.3 509.7,529.3 509.7,525.8" fill="#fff266" stroke="#5a4410" stroke-width="1.2"/>
<text x="539.7" y="528.4" font-family="Liberation Serif" font-size="6.8" fill="#4e3c08" text-anchor="middle" font-weight="normal" font-style="normal" stroke="#4e3c08" stroke-width="0.2">RESET#</text>
<polygon points="395.2,427.2 451.7,427.2 451.7,430.7 451.7,434.2 395.2,434.2 392.7,430.7" fill="#fff266" stroke="#5a4410" stroke-width="1.2"/>
<text x="423.2" y="433.3" font-family="Liberation Serif" font-size="6.8" fill="#4e3c08" text-anchor="middle" font-weight="normal" font-style="normal" stroke="#4e3c08" stroke-width="0.2">MII TX ER/nINT</text>
<path d="M479.8,379.3 L479.8,489.0" fill="none" stroke="#24245a" stroke-width="1.15"/>
<line x1="474.3" y1="379.3" x2="485.3" y2="379.3" stroke="#d85858" stroke-width="1.3"/>
<text x="479.8" y="376.3" font-family="Liberation Serif" font-size="7" fill="#d85858" text-anchor="middle" font-weight="normal" font-style="normal">3V3</text>
<rect x="476.5" y="402.5" width="6" height="11" fill="#fdfcf4"/>
<polyline points="479.8,402.6 481.3,404.4 478.3,406.2 481.3,408.1 478.3,409.9 481.3,411.7 479.8,413.5" fill="none" stroke="#24245a" stroke-width="1.25"/>
<rect x="476.5" y="454" width="6" height="11" fill="#fdfcf4"/>
<polyline points="479.8,454.4 481.3,456.0 478.3,457.7 481.3,459.4 478.3,461.0 481.3,462.6 479.8,464.3" fill="none" stroke="#24245a" stroke-width="1.25"/>
<circle cx="479.8" cy="430.7" r="2.0" fill="#1e1e5a"/>
<text x="483.0" y="407.5" font-family="Liberation Serif" font-size="6.8" fill="#484880" text-anchor="start" font-weight="normal" font-style="normal">R123</text>
<text x="483.0" y="414.5" font-family="Liberation Serif" font-size="6.8" fill="#484880" text-anchor="start" font-weight="normal" font-style="normal">N/A</text>
<text x="483.0" y="458.5" font-family="Liberation Serif" font-size="6.8" fill="#484880" text-anchor="start" font-weight="normal" font-style="normal">R127</text>
<text x="483.0" y="466.0" font-family="Liberation Serif" font-size="6.8" fill="#484880" text-anchor="start" font-weight="normal" font-style="normal">4K7</text>
<line x1="472.8" y1="489.0" x2="486.8" y2="489.0" stroke="#9a5040" stroke-width="1.2"/>
<line x1="475.3" y1="491.5" x2="484.3" y2="491.5" stroke="#9a5040" stroke-width="1.2"/>
<line x1="477.8" y1="494.0" x2="481.8" y2="494.0" stroke="#9a5040" stroke-width="1.2"/>
<text x="407.2" y="546.8" font-family="Liberation Serif" font-size="6.6" fill="#333333" text-anchor="start" font-weight="normal" font-style="normal">Note:</text>
<text x="407.2" y="554.2" font-family="Liberation Serif" font-size="6.6" fill="#333333" text-anchor="start" font-weight="normal" font-style="normal">Remove R127 and keep R123  when nINT function</text>
<text x="407.2" y="561.6" font-family="Liberation Serif" font-size="6.6" fill="#333333" text-anchor="start" font-weight="normal" font-style="normal">is enabled, TXER  is disabled</text>
<text x="407.2" y="569.0" font-family="Liberation Serif" font-size="6.6" fill="#333333" text-anchor="start" font-weight="normal" font-style="normal">Remove R123 and keep R127  when nINT function</text>
<text x="407.2" y="576.4" font-family="Liberation Serif" font-size="6.6" fill="#333333" text-anchor="start" font-weight="normal" font-style="normal">is disabled, TXER is enabled</text>
<rect x="801.5" y="320.9" width="131.89999999999998" height="219.30000000000007" fill="#fefda8" stroke="#8b5a3a" stroke-width="1.6"/>
<text x="802.0" y="311.5" font-family="Liberation Serif" font-size="7" fill="#50507a" text-anchor="start" font-weight="normal" font-style="normal">U9</text>
<text x="802.0" y="318.8" font-family="Liberation Serif" font-size="7" fill="#50507a" text-anchor="start" font-weight="normal" font-style="normal">LAN8740Ai-EN-TR</text>
<line x1="787.0" y1="328.6" x2="801.5" y2="328.6" stroke="#1a1a1a" stroke-width="1.4"/>
<text x="798.0" y="327.3" font-family="Liberation Serif" font-size="6.5" fill="#4a4a4a" text-anchor="end" font-weight="normal" font-style="normal">7</text>
<text x="807.0" y="331.0" font-family="Liberation Serif" font-size="6.8" fill="#363414" text-anchor="start" font-weight="normal" font-style="normal" stroke="#363414" stroke-width="0.22">RXCLK/PHYAD1</text>
<line x1="787.0" y1="335.8" x2="801.5" y2="335.8" stroke="#1a1a1a" stroke-width="1.4"/>
<text x="798.0" y="334.5" font-family="Liberation Serif" font-size="6.5" fill="#4a4a4a" text-anchor="end" font-weight="normal" font-style="normal">8</text>
<text x="807.0" y="338.2" font-family="Liberation Serif" font-size="6.8" fill="#363414" text-anchor="start" font-weight="normal" font-style="normal" stroke="#363414" stroke-width="0.22">RXD3/PHYAD2</text>
<line x1="787.0" y1="343.0" x2="801.5" y2="343.0" stroke="#1a1a1a" stroke-width="1.4"/>
<text x="798.0" y="341.7" font-family="Liberation Serif" font-size="6.5" fill="#4a4a4a" text-anchor="end" font-weight="normal" font-style="normal">9</text>
<text x="807.0" y="345.4" font-family="Liberation Serif" font-size="6.8" fill="#363414" text-anchor="start" font-weight="normal" font-style="normal" stroke="#363414" stroke-width="0.22">RXD2/nPME/RMIISEL</text>
<line x1="787.0" y1="350.3" x2="801.5" y2="350.3" stroke="#1a1a1a" stroke-width="1.4"/>
<text x="798.0" y="349.0" font-family="Liberation Serif" font-size="6.5" fill="#4a4a4a" text-anchor="end" font-weight="normal" font-style="normal">10</text>
<text x="807.0" y="352.7" font-family="Liberation Serif" font-size="6.8" fill="#363414" text-anchor="start" font-weight="normal" font-style="normal" stroke="#363414" stroke-width="0.22">RXD1/MODE1</text>
<line x1="787.0" y1="357.7" x2="801.5" y2="357.7" stroke="#1a1a1a" stroke-width="1.4"/>
<text x="798.0" y="356.4" font-family="Liberation Serif" font-size="6.5" fill="#4a4a4a" text-anchor="end" font-weight="normal" font-style="normal">11</text>
<text x="807.0" y="360.1" font-family="Liberation Serif" font-size="6.8" fill="#363414" text-anchor="start" font-weight="normal" font-style="normal" stroke="#363414" stroke-width="0.22">RXD0/MODE0</text>
<line x1="787.0" y1="365.1" x2="801.5" y2="365.1" stroke="#1a1a1a" stroke-width="1.4"/>
<text x="798.0" y="363.8" font-family="Liberation Serif" font-size="6.5" fill="#4a4a4a" text-anchor="end" font-weight="normal" font-style="normal">26</text>
<text x="807.0" y="367.5" font-family="Liberation Serif" font-size="6.8" fill="#363414" text-anchor="start" font-weight="normal" font-style="normal" stroke="#363414" stroke-width="0.22">RXDV</text>
<line x1="787.0" y1="372.4" x2="801.5" y2="372.4" stroke="#1a1a1a" stroke-width="1.4"/>
<text x="798.0" y="371.1" font-family="Liberation Serif" font-size="6.5" fill="#4a4a4a" text-anchor="end" font-weight="normal" font-style="normal">13</text>
<text x="807.0" y="374.8" font-family="Liberation Serif" font-size="6.8" fill="#363414" text-anchor="start" font-weight="normal" font-style="normal" stroke="#363414" stroke-width="0.22">RXER/RXD4/PHYAD0</text>
<line x1="787.0" y1="386.6" x2="801.5" y2="386.6" stroke="#1a1a1a" stroke-width="1.4"/>
<text x="798.0" y="385.3" font-family="Liberation Serif" font-size="6.5" fill="#4a4a4a" text-anchor="end" font-weight="normal" font-style="normal">20</text>
<text x="807.0" y="389.0" font-family="Liberation Serif" font-size="6.8" fill="#363414" text-anchor="start" font-weight="normal" font-style="normal" stroke="#363414" stroke-width="0.22">TXCLK</text>
<line x1="787.0" y1="393.9" x2="801.5" y2="393.9" stroke="#1a1a1a" stroke-width="1.4"/>
<text x="798.0" y="392.6" font-family="Liberation Serif" font-size="6.5" fill="#4a4a4a" text-anchor="end" font-weight="normal" font-style="normal">21</text>
<text x="807.0" y="396.3" font-family="Liberation Serif" font-size="6.8" fill="#363414" text-anchor="start" font-weight="normal" font-style="normal" stroke="#363414" stroke-width="0.22">TXEN</text>
<line x1="787.0" y1="401.3" x2="801.5" y2="401.3" stroke="#1a1a1a" stroke-width="1.4"/>
<text x="798.0" y="400.0" font-family="Liberation Serif" font-size="6.5" fill="#4a4a4a" text-anchor="end" font-weight="normal" font-style="normal">22</text>
<text x="807.0" y="403.7" font-family="Liberation Serif" font-size="6.8" fill="#363414" text-anchor="start" font-weight="normal" font-style="normal" stroke="#363414" stroke-width="0.22">TXD0</text>
<line x1="787.0" y1="408.6" x2="801.5" y2="408.6" stroke="#1a1a1a" stroke-width="1.4"/>
<text x="798.0" y="407.3" font-family="Liberation Serif" font-size="6.5" fill="#4a4a4a" text-anchor="end" font-weight="normal" font-style="normal">23</text>
<text x="807.0" y="411.0" font-family="Liberation Serif" font-size="6.8" fill="#363414" text-anchor="start" font-weight="normal" font-style="normal" stroke="#363414" stroke-width="0.22">TXD1</text>
<line x1="787.0" y1="416.0" x2="801.5" y2="416.0" stroke="#1a1a1a" stroke-width="1.4"/>
<text x="798.0" y="414.7" font-family="Liberation Serif" font-size="6.5" fill="#4a4a4a" text-anchor="end" font-weight="normal" font-style="normal">24</text>
<text x="807.0" y="418.4" font-family="Liberation Serif" font-size="6.8" fill="#363414" text-anchor="start" font-weight="normal" font-style="normal" stroke="#363414" stroke-width="0.22">TXD2</text>
<line x1="787.0" y1="423.4" x2="801.5" y2="423.4" stroke="#1a1a1a" stroke-width="1.4"/>
<text x="798.0" y="422.1" font-family="Liberation Serif" font-size="6.5" fill="#4a4a4a" text-anchor="end" font-weight="normal" font-style="normal">25</text>
<text x="807.0" y="425.8" font-family="Liberation Serif" font-size="6.8" fill="#363414" text-anchor="start" font-weight="normal" font-style="normal" stroke="#363414" stroke-width="0.22">TXD3</text>
<line x1="787.0" y1="430.7" x2="801.5" y2="430.7" stroke="#1a1a1a" stroke-width="1.4"/>
<text x="798.0" y="429.4" font-family="Liberation Serif" font-size="6.5" fill="#4a4a4a" text-anchor="end" font-weight="normal" font-style="normal">18</text>
<text x="807.0" y="433.1" font-family="Liberation Serif" font-size="6.8" fill="#363414" text-anchor="start" font-weight="normal" font-style="normal" stroke="#363414" stroke-width="0.22">nINT/TXER/TXD4</text>
<line x1="787.0" y1="445.4" x2="801.5" y2="445.4" stroke="#1a1a1a" stroke-width="1.4"/>
<text x="798.0" y="444.1" font-family="Liberation Serif" font-size="6.5" fill="#4a4a4a" text-anchor="end" font-weight="normal" font-style="normal">16</text>
<text x="807.0" y="447.8" font-family="Liberation Serif" font-size="6.8" fill="#363414" text-anchor="start" font-weight="normal" font-style="normal" stroke="#363414" stroke-width="0.22">MDIO</text>
<line x1="787.0" y1="453.0" x2="801.5" y2="453.0" stroke="#1a1a1a" stroke-width="1.4"/>
<text x="798.0" y="451.7" font-family="Liberation Serif" font-size="6.5" fill="#4a4a4a" text-anchor="end" font-weight="normal" font-style="normal">17</text>
<text x="807.0" y="455.4" font-family="Liberation Serif" font-size="6.8" fill="#363414" text-anchor="start" font-weight="normal" font-style="normal" stroke="#363414" stroke-width="0.22">MDC</text>
<line x1="787.0" y1="474.4" x2="801.5" y2="474.4" stroke="#1a1a1a" stroke-width="1.4"/>
<text x="798.0" y="473.1" font-family="Liberation Serif" font-size="6.5" fill="#4a4a4a" text-anchor="end" font-weight="normal" font-style="normal">14</text>
<text x="807.0" y="476.8" font-family="Liberation Serif" font-size="6.8" fill="#363414" text-anchor="start" font-weight="normal" font-style="normal" stroke="#363414" stroke-width="0.22">CRS</text>
<line x1="787.0" y1="481.7" x2="801.5" y2="481.7" stroke="#1a1a1a" stroke-width="1.4"/>
<text x="798.0" y="480.4" font-family="Liberation Serif" font-size="6.5" fill="#4a4a4a" text-anchor="end" font-weight="normal" font-style="normal">15</text>
<text x="807.0" y="484.1" font-family="Liberation Serif" font-size="6.8" fill="#363414" text-anchor="start" font-weight="normal" font-style="normal" stroke="#363414" stroke-width="0.22">COL/CRS_DV/MODE2</text>
<line x1="787.0" y1="503.8" x2="801.5" y2="503.8" stroke="#1a1a1a" stroke-width="1.4"/>
<text x="798.0" y="502.5" font-family="Liberation Serif" font-size="6.5" fill="#4a4a4a" text-anchor="end" font-weight="normal" font-style="normal">4</text>
<text x="807.0" y="506.2" font-family="Liberation Serif" font-size="6.8" fill="#363414" text-anchor="start" font-weight="normal" font-style="normal" stroke="#363414" stroke-width="0.22">XTAL2</text>
<line x1="787.0" y1="511.1" x2="801.5" y2="511.1" stroke="#1a1a1a" stroke-width="1.4"/>
<text x="798.0" y="509.8" font-family="Liberation Serif" font-size="6.5" fill="#4a4a4a" text-anchor="end" font-weight="normal" font-style="normal">5</text>
<text x="807.0" y="513.5" font-family="Liberation Serif" font-size="6.8" fill="#363414" text-anchor="start" font-weight="normal" font-style="normal" stroke="#363414" stroke-width="0.22">XTAL1/CLKIN</text>
<line x1="787.0" y1="525.8" x2="801.5" y2="525.8" stroke="#1a1a1a" stroke-width="1.4"/>
<text x="798.0" y="524.5" font-family="Liberation Serif" font-size="6.5" fill="#4a4a4a" text-anchor="end" font-weight="normal" font-style="normal">19</text>
<text x="807.0" y="528.2" font-family="Liberation Serif" font-size="6.8" fill="#363414" text-anchor="start" font-weight="normal" font-style="normal" stroke="#363414" stroke-width="0.22">nRST</text>
<line x1="787.0" y1="533.0" x2="801.5" y2="533.0" stroke="#1a1a1a" stroke-width="1.4"/>
<text x="798.0" y="531.7" font-family="Liberation Serif" font-size="6.5" fill="#4a4a4a" text-anchor="end" font-weight="normal" font-style="normal">32</text>
<text x="807.0" y="535.4" font-family="Liberation Serif" font-size="6.8" fill="#363414" text-anchor="start" font-weight="normal" font-style="normal" stroke="#363414" stroke-width="0.22">RBIAS</text>
<line x1="933.4" y1="328.2" x2="947.5" y2="328.2" stroke="#1a1a1a" stroke-width="1.4"/>
<text x="937.5" y="326.9" font-family="Liberation Serif" font-size="6.5" fill="#4a4a4a" text-anchor="start" font-weight="normal" font-style="normal">29</text>
<text x="929.0" y="330.6" font-family="Liberation Serif" font-size="6.8" fill="#363414" text-anchor="end" font-weight="normal" font-style="normal" stroke="#363414" stroke-width="0.22">TXP</text>
<line x1="933.4" y1="343.0" x2="947.5" y2="343.0" stroke="#1a1a1a" stroke-width="1.4"/>
<text x="937.5" y="341.7" font-family="Liberation Serif" font-size="6.5" fill="#4a4a4a" text-anchor="start" font-weight="normal" font-style="normal">28</text>
<text x="929.0" y="345.4" font-family="Liberation Serif" font-size="6.8" fill="#363414" text-anchor="end" font-weight="normal" font-style="normal" stroke="#363414" stroke-width="0.22">TXN</text>
<line x1="933.4" y1="357.7" x2="947.5" y2="357.7" stroke="#1a1a1a" stroke-width="1.4"/>
<text x="937.5" y="356.4" font-family="Liberation Serif" font-size="6.5" fill="#4a4a4a" text-anchor="start" font-weight="normal" font-style="normal">31</text>
<text x="929.0" y="360.1" font-family="Liberation Serif" font-size="6.8" fill="#363414" text-anchor="end" font-weight="normal" font-style="normal" stroke="#363414" stroke-width="0.22">RXP</text>
<line x1="933.4" y1="372.4" x2="947.5" y2="372.4" stroke="#1a1a1a" stroke-width="1.4"/>
<text x="937.5" y="371.1" font-family="Liberation Serif" font-size="6.5" fill="#4a4a4a" text-anchor="start" font-weight="normal" font-style="normal">30</text>
<text x="929.0" y="374.8" font-family="Liberation Serif" font-size="6.8" fill="#363414" text-anchor="end" font-weight="normal" font-style="normal" stroke="#363414" stroke-width="0.22">RXN</text>
<line x1="933.4" y1="393.8" x2="947.5" y2="393.8" stroke="#1a1a1a" stroke-width="1.4"/>
<text x="937.5" y="392.5" font-family="Liberation Serif" font-size="6.5" fill="#4a4a4a" text-anchor="start" font-weight="normal" font-style="normal">3</text>
<text x="929.0" y="396.2" font-family="Liberation Serif" font-size="6.8" fill="#363414" text-anchor="end" font-weight="normal" font-style="normal" stroke="#363414" stroke-width="0.22">LED1/nINT/nPME/REGOFF</text>
<line x1="933.4" y1="401.4" x2="947.5" y2="401.4" stroke="#1a1a1a" stroke-width="1.4"/>
<text x="937.5" y="400.1" font-family="Liberation Serif" font-size="6.5" fill="#4a4a4a" text-anchor="start" font-weight="normal" font-style="normal">2</text>
<text x="929.0" y="403.8" font-family="Liberation Serif" font-size="6.8" fill="#363414" text-anchor="end" font-weight="normal" font-style="normal" stroke="#363414" stroke-width="0.22">LED2/nINT/nPME/nINTSEL</text>
<line x1="933.4" y1="423.6" x2="947.5" y2="423.6" stroke="#1a1a1a" stroke-width="1.4"/>
<text x="937.5" y="422.3" font-family="Liberation Serif" font-size="6.5" fill="#4a4a4a" text-anchor="start" font-weight="normal" font-style="normal">12</text>
<text x="929.0" y="426.0" font-family="Liberation Serif" font-size="6.8" fill="#363414" text-anchor="end" font-weight="normal" font-style="normal" stroke="#363414" stroke-width="0.22">VDDIO</text>
<line x1="933.4" y1="496.2" x2="947.5" y2="496.2" stroke="#1a1a1a" stroke-width="1.4"/>
<text x="937.5" y="494.9" font-family="Liberation Serif" font-size="6.5" fill="#4a4a4a" text-anchor="start" font-weight="normal" font-style="normal">27</text>
<text x="929.0" y="498.6" font-family="Liberation Serif" font-size="6.8" fill="#363414" text-anchor="end" font-weight="normal" font-style="normal" stroke="#363414" stroke-width="0.22">VDD1A</text>
<line x1="933.4" y1="503.7" x2="947.5" y2="503.7" stroke="#1a1a1a" stroke-width="1.4"/>
<text x="937.5" y="502.4" font-family="Liberation Serif" font-size="6.5" fill="#4a4a4a" text-anchor="start" font-weight="normal" font-style="normal">1</text>
<text x="929.0" y="506.1" font-family="Liberation Serif" font-size="6.8" fill="#363414" text-anchor="end" font-weight="normal" font-style="normal" stroke="#363414" stroke-width="0.22">VDD2A</text>
<line x1="933.4" y1="525.9" x2="947.5" y2="525.9" stroke="#1a1a1a" stroke-width="1.4"/>
<text x="937.5" y="524.6" font-family="Liberation Serif" font-size="6.5" fill="#4a4a4a" text-anchor="start" font-weight="normal" font-style="normal">6</text>
<text x="929.0" y="528.3" font-family="Liberation Serif" font-size="6.8" fill="#363414" text-anchor="end" font-weight="normal" font-style="normal" stroke="#363414" stroke-width="0.22">VDDCR</text>
<line x1="933.4" y1="533.4" x2="947.5" y2="533.4" stroke="#1a1a1a" stroke-width="1.4"/>
<text x="937.5" y="532.1" font-family="Liberation Serif" font-size="6.5" fill="#4a4a4a" text-anchor="start" font-weight="normal" font-style="normal">33</text>
<text x="929.0" y="535.8" font-family="Liberation Serif" font-size="6.8" fill="#363414" text-anchor="end" font-weight="normal" font-style="normal" stroke="#363414" stroke-width="0.22">EP</text>
<text x="802.0" y="553.5" font-family="Liberation Serif" font-size="7" fill="#3a3a9a" text-anchor="start" font-weight="normal" font-style="normal">PHY Address: 01h</text>
<line x1="944.5" y1="270.5" x2="952.5" y2="270.5" stroke="#c04040" stroke-width="1.3"/>
<text x="948.5" y="267.5" font-family="Liberation Serif" font-size="7" fill="#c04040" text-anchor="middle" font-weight="normal" font-style="normal">VDD_ETH</text>
<path d="M948.5,270.5 L948.5,313.8" fill="none" stroke="#24245a" stroke-width="1.15"/>
<rect x="941" y="293" width="15" height="4.5" fill="#fdfcf4"/>
<line x1="942.0" y1="293.6" x2="955.0" y2="293.6" stroke="#24245a" stroke-width="1.6"/>
<line x1="942.0" y1="297.2" x2="955.0" y2="297.2" stroke="#24245a" stroke-width="1.6"/>
<line x1="941.5" y1="313.8" x2="955.5" y2="313.8" stroke="#9a5040" stroke-width="1.2"/>
<line x1="944.0" y1="316.3" x2="953.0" y2="316.3" stroke="#9a5040" stroke-width="1.2"/>
<line x1="946.5" y1="318.8" x2="950.5" y2="318.8" stroke="#9a5040" stroke-width="1.2"/>
<text x="955.0" y="297.0" font-family="Liberation Serif" font-size="6.8" fill="#484880" text-anchor="start" font-weight="normal" font-style="normal">C56</text>
<text x="955.0" y="304.5" font-family="Liberation Serif" font-size="6.8" fill="#484880" text-anchor="start" font-weight="normal" font-style="normal">100nF</text>
<circle cx="948.5" cy="284.5" r="2.0" fill="#1e1e5a"/>
<line x1="948.5" y1="284.5" x2="1042.6" y2="284.5" stroke="#24245a" stroke-width="1.15"/>
<line x1="947.5" y1="328.2" x2="1080.0" y2="328.2" stroke="#24245a" stroke-width="1.15"/>
<line x1="947.5" y1="343.0" x2="1080.0" y2="343.0" stroke="#24245a" stroke-width="1.15"/>
<line x1="947.5" y1="357.7" x2="1080.0" y2="357.7" stroke="#24245a" stroke-width="1.15"/>
<line x1="947.5" y1="372.4" x2="1080.0" y2="372.4" stroke="#24245a" stroke-width="1.15"/>
<path d="M977.2,284.5 L977.2,340.6 A2.4,2.4 0 0 1 977.2,345.4 L977.2,355.3 A2.4,2.4 0 0 1 977.2,360.1 L977.2,370.0 A2.4,2.4 0 0 1 977.2,374.8 L977.2,408.8" fill="none" stroke="#24245a" stroke-width="1.15"/>
<circle cx="977.2" cy="328.2" r="2.0" fill="#1e1e5a"/>
<circle cx="977.2" cy="284.5" r="2.0" fill="#1e1e5a"/>
<rect x="974.2" y="301" width="6" height="10" fill="#fdfcf4"/>
<polyline points="977.2,301.3 978.7,302.9 975.7,304.4 978.7,306.0 975.7,307.5 978.7,309.1 977.2,310.6" fill="none" stroke="#24245a" stroke-width="1.25"/>
<text x="980.2" y="304.5" font-family="Liberation Serif" font-size="6.8" fill="#484880" text-anchor="start" font-weight="normal" font-style="normal">R91</text>
<text x="980.2" y="311.8" font-family="Liberation Serif" font-size="6.8" fill="#484880" text-anchor="start" font-weight="normal" font-style="normal">49.9R</text>
<rect x="970.2" y="388.5" width="14" height="4.5" fill="#fdfcf4"/>
<line x1="971.2" y1="388.8" x2="983.2" y2="388.8" stroke="#24245a" stroke-width="1.6"/>
<line x1="971.2" y1="392.6" x2="983.2" y2="392.6" stroke="#24245a" stroke-width="1.6"/>
<text x="980.2" y="385.5" font-family="Liberation Serif" font-size="6.8" fill="#484880" text-anchor="start" font-weight="normal" font-style="normal">C68</text>
<text x="980.2" y="400.0" font-family="Liberation Serif" font-size="6.8" fill="#484880" text-anchor="start" font-weight="normal" font-style="normal">10pF</text>
<path d="M999.0,284.5 L999.0,325.8 A2.4,2.4 0 0 1 999.0,330.6 L999.0,355.3 A2.4,2.4 0 0 1 999.0,360.1 L999.0,370.0 A2.4,2.4 0 0 1 999.0,374.8 L999.0,408.8" fill="none" stroke="#24245a" stroke-width="1.15"/>
<circle cx="999.0" cy="343.0" r="2.0" fill="#1e1e5a"/>
<circle cx="999.0" cy="284.5" r="2.0" fill="#1e1e5a"/>
<rect x="996.0" y="301" width="6" height="10" fill="#fdfcf4"/>
<polyline points="999.0,301.3 1000.5,302.9 997.5,304.4 1000.5,306.0 997.5,307.5 1000.5,309.1 999.0,310.6" fill="none" stroke="#24245a" stroke-width="1.25"/>
<text x="1002.0" y="304.5" font-family="Liberation Serif" font-size="6.8" fill="#484880" text-anchor="start" font-weight="normal" font-style="normal">R90</text>
<text x="1002.0" y="311.8" font-family="Liberation Serif" font-size="6.8" fill="#484880" text-anchor="start" font-weight="normal" font-style="normal">49.9R</text>
<rect x="992.0" y="388.5" width="14" height="4.5" fill="#fdfcf4"/>
<line x1="993.0" y1="388.8" x2="1005.0" y2="388.8" stroke="#24245a" stroke-width="1.6"/>
<line x1="993.0" y1="392.6" x2="1005.0" y2="392.6" stroke="#24245a" stroke-width="1.6"/>
<text x="1002.0" y="385.5" font-family="Liberation Serif" font-size="6.8" fill="#484880" text-anchor="start" font-weight="normal" font-style="normal">C67</text>
<text x="1002.0" y="400.0" font-family="Liberation Serif" font-size="6.8" fill="#484880" text-anchor="start" font-weight="normal" font-style="normal">10pF</text>
<path d="M1021.0,284.5 L1021.0,325.8 A2.4,2.4 0 0 1 1021.0,330.6 L1021.0,340.6 A2.4,2.4 0 0 1 1021.0,345.4 L1021.0,370.0 A2.4,2.4 0 0 1 1021.0,374.8 L1021.0,408.8" fill="none" stroke="#24245a" stroke-width="1.15"/>
<circle cx="1021.0" cy="357.7" r="2.0" fill="#1e1e5a"/>
<circle cx="1021.0" cy="284.5" r="2.0" fill="#1e1e5a"/>
<rect x="1018.0" y="301" width="6" height="10" fill="#fdfcf4"/>
<polyline points="1021.0,301.3 1022.5,302.9 1019.5,304.4 1022.5,306.0 1019.5,307.5 1022.5,309.1 1021.0,310.6" fill="none" stroke="#24245a" stroke-width="1.25"/>
<text x="1024.0" y="304.5" font-family="Liberation Serif" font-size="6.8" fill="#484880" text-anchor="start" font-weight="normal" font-style="normal">R88</text>
<text x="1024.0" y="311.8" font-family="Liberation Serif" font-size="6.8" fill="#484880" text-anchor="start" font-weight="normal" font-style="normal">49.9R</text>
<rect x="1014.0" y="388.5" width="14" height="4.5" fill="#fdfcf4"/>
<line x1="1015.0" y1="388.8" x2="1027.0" y2="388.8" stroke="#24245a" stroke-width="1.6"/>
<line x1="1015.0" y1="392.6" x2="1027.0" y2="392.6" stroke="#24245a" stroke-width="1.6"/>
<text x="1024.0" y="385.5" font-family="Liberation Serif" font-size="6.8" fill="#484880" text-anchor="start" font-weight="normal" font-style="normal">C65</text>
<text x="1024.0" y="400.0" font-family="Liberation Serif" font-size="6.8" fill="#484880" text-anchor="start" font-weight="normal" font-style="normal">10pF</text>
<path d="M1042.6,284.5 L1042.6,325.8 A2.4,2.4 0 0 1 1042.6,330.6 L1042.6,340.6 A2.4,2.4 0 0 1 1042.6,345.4 L1042.6,355.3 A2.4,2.4 0 0 1 1042.6,360.1 L1042.6,408.8" fill="none" stroke="#24245a" stroke-width="1.15"/>
<circle cx="1042.6" cy="372.4" r="2.0" fill="#1e1e5a"/>
<rect x="1039.6" y="301" width="6" height="10" fill="#fdfcf4"/>
<polyline points="1042.6,301.3 1044.1,302.9 1041.1,304.4 1044.1,306.0 1041.1,307.5 1044.1,309.1 1042.6,310.6" fill="none" stroke="#24245a" stroke-width="1.25"/>
<text x="1045.6" y="304.5" font-family="Liberation Serif" font-size="6.8" fill="#484880" text-anchor="start" font-weight="normal" font-style="normal">R89</text>
<text x="1045.6" y="311.8" font-family="Liberation Serif" font-size="6.8" fill="#484880" text-anchor="start" font-weight="normal" font-style="normal">49.9R</text>
<rect x="1035.6" y="388.5" width="14" height="4.5" fill="#fdfcf4"/>
<line x1="1036.6" y1="388.8" x2="1048.6" y2="388.8" stroke="#24245a" stroke-width="1.6"/>
<line x1="1036.6" y1="392.6" x2="1048.6" y2="392.6" stroke="#24245a" stroke-width="1.6"/>
<text x="1045.6" y="385.5" font-family="Liberation Serif" font-size="6.8" fill="#484880" text-anchor="start" font-weight="normal" font-style="normal">C66</text>
<text x="1045.6" y="400.0" font-family="Liberation Serif" font-size="6.8" fill="#484880" text-anchor="start" font-weight="normal" font-style="normal">10pF</text>
<circle cx="999.0" cy="408.8" r="2.0" fill="#1e1e5a"/>
<circle cx="1021.0" cy="408.8" r="2.0" fill="#1e1e5a"/>
<circle cx="1042.6" cy="408.8" r="2.0" fill="#1e1e5a"/>
<line x1="977.2" y1="408.8" x2="1050.0" y2="408.8" stroke="#24245a" stroke-width="1.15"/>
<line x1="1050.0" y1="401.8" x2="1050.0" y2="415.8" stroke="#a05040" stroke-width="1.2"/>
<line x1="1052.5" y1="404.3" x2="1052.5" y2="413.3" stroke="#a05040" stroke-width="1.2"/>
<line x1="1055.0" y1="406.8" x2="1055.0" y2="410.8" stroke="#a05040" stroke-width="1.2"/>
<polyline points="947.5,393.8 962.4,393.8 962.4,423.6 1064.5,423.6 1064.5,393.8 1080.0,393.8" fill="none" stroke="#24245a" stroke-width="1.15"/>
<polyline points="947.5,401.4 955.3,401.4 955.3,430.6 1013.8,430.6" fill="none" stroke="#24245a" stroke-width="1.15"/>
<path d="M1028.7,430.6 L1040.2,430.6 A2.4,2.4 0 0 1 1045.0,430.6 L1072.2,430.6" fill="none" stroke="#24245a" stroke-width="1.15"/>
<polyline points="1072.2,430.6 1072.2,401.4 1080.0,401.4" fill="none" stroke="#24245a" stroke-width="1.15"/>
<polyline points="947.5,423.6 948.6,423.6 948.6,438.1 976.8,438.1" fill="none" stroke="#24245a" stroke-width="1.15"/>
<line x1="976.8" y1="433.0" x2="976.8" y2="443.5" stroke="#d85858" stroke-width="1.3"/>
<text x="979.0" y="441.0" font-family="Liberation Serif" font-size="7" fill="#d85858" text-anchor="start" font-weight="normal" font-style="normal">3V3</text>
<circle cx="955.3" cy="438.1" r="2.0" fill="#1e1e5a"/>
<text x="956.0" y="428.5" font-family="Liberation Serif" font-size="7" fill="#c05050" text-anchor="start" font-weight="normal" font-style="normal">LED2_ETH</text>
<text x="993.0" y="428.5" font-family="Liberation Serif" font-size="7" fill="#484880" text-anchor="start" font-weight="normal" font-style="normal">SB22</text>
<rect x="1013.8" y="427.6" width="14.9" height="6" fill="#fdfcf4" stroke="#a05040" stroke-width="1.2"/>
<path d="M1016,431.6 Q1021.2,427.6 1026.5,431.6" fill="none" stroke="#a05040" stroke-width="0.9"/>
<rect x="1013.8" y="447.8" width="14.9" height="6" fill="#fdfcf4" stroke="#a05040" stroke-width="1.2"/>
<path d="M1016,451.8 Q1021.2,447.8 1026.5,451.8" fill="none" stroke="#a05040" stroke-width="0.9"/>
<circle cx="1035.7" cy="430.6" r="2.0" fill="#1e1e5a"/>
<circle cx="1065.0" cy="430.6" r="2.0" fill="#1e1e5a"/>
<circle cx="1042.6" cy="423.6" r="2.0" fill="#1e1e5a"/>
<polyline points="1028.7,450.8 1035.7,450.8 1035.7,430.6" fill="none" stroke="#24245a" stroke-width="1.15"/>
<polyline points="1013.8,450.8 991.8,450.8 991.8,496.2" fill="none" stroke="#24245a" stroke-width="1.15"/>
<text x="993.0" y="448.0" font-family="Liberation Serif" font-size="7" fill="#484880" text-anchor="start" font-weight="normal" font-style="normal">SB14</text>
<path d="M1042.6,423.6 L1042.6,481.6" fill="none" stroke="#24245a" stroke-width="1.15"/>
<rect x="1039.5" y="447" width="6" height="10" fill="#fdfcf4"/>
<polyline points="1042.6,447.6 1044.1,449.1 1041.1,450.5 1044.1,452.0 1041.1,453.5 1044.1,454.9 1042.6,456.4" fill="none" stroke="#24245a" stroke-width="1.25"/>
<line x1="1035.6" y1="481.6" x2="1049.6" y2="481.6" stroke="#9a5040" stroke-width="1.2"/>
<line x1="1038.1" y1="484.1" x2="1047.1" y2="484.1" stroke="#9a5040" stroke-width="1.2"/>
<line x1="1040.6" y1="486.6" x2="1044.6" y2="486.6" stroke="#9a5040" stroke-width="1.2"/>
<text x="1046.0" y="452.0" font-family="Liberation Serif" font-size="6.8" fill="#484880" text-anchor="start" font-weight="normal" font-style="normal">R119</text>
<text x="1046.0" y="459.5" font-family="Liberation Serif" font-size="6.8" fill="#484880" text-anchor="start" font-weight="normal" font-style="normal">N/A</text>
<path d="M1065.0,430.6 L1065.0,481.6" fill="none" stroke="#24245a" stroke-width="1.15"/>
<rect x="1062" y="447" width="6" height="10" fill="#fdfcf4"/>
<polyline points="1065.0,447.6 1066.5,449.1 1063.5,450.5 1066.5,452.0 1063.5,453.5 1066.5,454.9 1065.0,456.4" fill="none" stroke="#24245a" stroke-width="1.25"/>
<line x1="1058.0" y1="481.6" x2="1072.0" y2="481.6" stroke="#9a5040" stroke-width="1.2"/>
<line x1="1060.5" y1="484.1" x2="1069.5" y2="484.1" stroke="#9a5040" stroke-width="1.2"/>
<line x1="1063.0" y1="486.6" x2="1067.0" y2="486.6" stroke="#9a5040" stroke-width="1.2"/>
<text x="1068.0" y="452.0" font-family="Liberation Serif" font-size="6.8" fill="#484880" text-anchor="start" font-weight="normal" font-style="normal">R94</text>
<text x="1068.0" y="459.5" font-family="Liberation Serif" font-size="6.8" fill="#484880" text-anchor="start" font-weight="normal" font-style="normal">10K</text>
<path d="M955.3,438.1 L955.3,474.6" fill="none" stroke="#24245a" stroke-width="1.15"/>
<rect x="948" y="445.5" width="15" height="5" fill="#fdfcf4"/>
<line x1="948.8" y1="446.0" x2="961.8" y2="446.0" stroke="#24245a" stroke-width="1.6"/>
<line x1="948.8" y1="450.0" x2="961.8" y2="450.0" stroke="#24245a" stroke-width="1.6"/>
<line x1="948.3" y1="474.6" x2="962.3" y2="474.6" stroke="#a05040" stroke-width="1.2"/>
<line x1="950.8" y1="477.1" x2="959.8" y2="477.1" stroke="#a05040" stroke-width="1.2"/>
<line x1="953.3" y1="479.6" x2="957.3" y2="479.6" stroke="#a05040" stroke-width="1.2"/>
<text x="962.0" y="449.0" font-family="Liberation Serif" font-size="6.8" fill="#484880" text-anchor="start" font-weight="normal" font-style="normal">C97</text>
<text x="962.0" y="456.5" font-family="Liberation Serif" font-size="6.8" fill="#484880" text-anchor="start" font-weight="normal" font-style="normal">100nF</text>
<line x1="947.5" y1="496.2" x2="1057.5" y2="496.2" stroke="#24245a" stroke-width="1.15"/>
<polyline points="947.5,503.7 955.3,503.7 955.3,496.2" fill="none" stroke="#24245a" stroke-width="1.15"/>
<circle cx="955.3" cy="496.2" r="2.0" fill="#1e1e5a"/>
<circle cx="991.8" cy="496.2" r="2.0" fill="#1e1e5a"/>
<circle cx="1042.6" cy="496.2" r="2.0" fill="#1e1e5a"/>
<line x1="1057.5" y1="491.0" x2="1057.5" y2="501.5" stroke="#d85858" stroke-width="1.3"/>
<text x="1060.0" y="499.0" font-family="Liberation Serif" font-size="7" fill="#d85858" text-anchor="start" font-weight="normal" font-style="normal">VDD_ETH</text>
<polyline points="1042.6,496.2 1042.6,533.4 1080.0,533.4" fill="none" stroke="#24245a" stroke-width="1.15"/>
<circle cx="1057.5" cy="533.4" r="2.0" fill="#1e1e5a"/>
<polyline points="947.5,525.9 1028.8,525.9 1028.8,576.5" fill="none" stroke="#24245a" stroke-width="1.15"/>
<circle cx="999.3" cy="525.9" r="2.0" fill="#1e1e5a"/>
<line x1="999.3" y1="525.9" x2="999.3" y2="576.5" stroke="#24245a" stroke-width="1.15"/>
<line x1="947.5" y1="533.4" x2="962.6" y2="533.4" stroke="#24245a" stroke-width="1.15"/>
<line x1="962.6" y1="526.5" x2="962.6" y2="540.5" stroke="#a05040" stroke-width="1.2"/>
<line x1="965.2" y1="529.0" x2="965.2" y2="538.0" stroke="#a05040" stroke-width="1.2"/>
<line x1="967.8" y1="531.5" x2="967.8" y2="535.5" stroke="#a05040" stroke-width="1.2"/>
<line x1="1057.5" y1="533.4" x2="1057.5" y2="576.5" stroke="#24245a" stroke-width="1.15"/>
<rect x="992.3" y="548.5" width="14" height="4.5" fill="#fdfcf4"/>
<line x1="993.3" y1="548.8" x2="1005.3" y2="548.8" stroke="#24245a" stroke-width="1.6"/>
<line x1="993.3" y1="552.6" x2="1005.3" y2="552.6" stroke="#24245a" stroke-width="1.6"/>
<line x1="992.3" y1="576.5" x2="1006.3" y2="576.5" stroke="#a05040" stroke-width="1.2"/>
<line x1="994.8" y1="579.0" x2="1003.8" y2="579.0" stroke="#a05040" stroke-width="1.2"/>
<line x1="997.3" y1="581.5" x2="1001.3" y2="581.5" stroke="#a05040" stroke-width="1.2"/>
<text x="1006.8" y="551.5" font-family="Liberation Serif" font-size="6.8" fill="#484880" text-anchor="start" font-weight="normal" font-style="normal">C86</text>
<text x="1006.8" y="559.0" font-family="Liberation Serif" font-size="6.8" fill="#484880" text-anchor="start" font-weight="normal" font-style="normal">470pF</text>
<rect x="1021.8" y="548.5" width="14" height="4.5" fill="#fdfcf4"/>
<line x1="1022.8" y1="548.8" x2="1034.8" y2="548.8" stroke="#24245a" stroke-width="1.6"/>
<line x1="1022.8" y1="552.6" x2="1034.8" y2="552.6" stroke="#24245a" stroke-width="1.6"/>
<line x1="1021.8" y1="576.5" x2="1035.8" y2="576.5" stroke="#a05040" stroke-width="1.2"/>
<line x1="1024.3" y1="579.0" x2="1033.3" y2="579.0" stroke="#a05040" stroke-width="1.2"/>
<line x1="1026.8" y1="581.5" x2="1030.8" y2="581.5" stroke="#a05040" stroke-width="1.2"/>
<text x="1036.3" y="551.5" font-family="Liberation Serif" font-size="6.8" fill="#484880" text-anchor="start" font-weight="normal" font-style="normal">C89</text>
<text x="1036.3" y="559.0" font-family="Liberation Serif" font-size="6.8" fill="#484880" text-anchor="start" font-weight="normal" font-style="normal">1uF</text>
<rect x="1050.5" y="548.5" width="14" height="4.5" fill="#fdfcf4"/>
<line x1="1051.5" y1="548.8" x2="1063.5" y2="548.8" stroke="#24245a" stroke-width="1.6"/>
<line x1="1051.5" y1="552.6" x2="1063.5" y2="552.6" stroke="#24245a" stroke-width="1.6"/>
<line x1="1050.5" y1="576.5" x2="1064.5" y2="576.5" stroke="#a05040" stroke-width="1.2"/>
<line x1="1053.0" y1="579.0" x2="1062.0" y2="579.0" stroke="#a05040" stroke-width="1.2"/>
<line x1="1055.5" y1="581.5" x2="1059.5" y2="581.5" stroke="#a05040" stroke-width="1.2"/>
<text x="1065.0" y="551.5" font-family="Liberation Serif" font-size="6.8" fill="#484880" text-anchor="start" font-weight="normal" font-style="normal">C69</text>
<text x="1065.0" y="559.0" font-family="Liberation Serif" font-size="6.8" fill="#484880" text-anchor="start" font-weight="normal" font-style="normal">100nF</text>
<text x="1027.0" y="611.5" font-family="Liberation Serif" font-size="6.6" fill="#333333" text-anchor="start" font-weight="normal" font-style="normal">nd close</text>
<text x="1000.0" y="626.5" font-family="Liberation Serif" font-size="6.6" fill="#333333" text-anchor="start" font-weight="normal" font-style="normal">function, a</text>
<text x="941.0" y="632.5" font-family="Liberation Serif" font-size="6.6" fill="#333333" text-anchor="start" font-weight="normal" font-style="normal">close SB14,SB25, open SB22,SB28 for LED2</text>
<line x1="948.0" y1="300.0" x2="948.0" y2="313.8" stroke="#24245a" stroke-width="1.15"/>
<g fill="none" stroke-linecap="square" opacity="0.95"><path d="M733.5,604.3 L731.2,612.7 M731.2,611.3 L741.7,611.3 M730.0,618.3 L741.7,618.3 M736.6,604.3 L736.6,618.3 M736.6,618.3 L731.2,628.1 M737.0,619.7 L741.7,626.7 M743.6,609.9 L752.2,609.9 M743.6,609.9 L743.6,625.3 M752.2,609.9 L752.2,625.3 M743.6,625.3 L752.2,625.3" stroke="#9c9c9c" stroke-width="2.8" transform="translate(-1.4,1.7)"/><path d="M758.8,605.7 L777.6,604.9 M762.4,609.9 L765.9,614.1 M774.0,609.3 L770.5,614.1 M756.5,616.9 L779.9,616.9 M768.2,605.7 L768.2,626.7 M768.2,626.7 L763.5,625.3" stroke="#9c9c9c" stroke-width="2.8" transform="translate(-1.4,1.7)"/><path d="M784.2,607.1 L793.5,607.1 M788.9,607.1 L788.9,622.5 M783.0,623.9 L793.5,619.7 M797.0,602.9 L794.7,612.7 M795.9,609.9 L806.4,609.9 M804.1,609.9 L795.9,628.1 M797.0,612.7 L806.4,628.1" stroke="#9c9c9c" stroke-width="2.8" transform="translate(-1.4,1.7)"/><ellipse cx="822.5" cy="614.5" rx="11" ry="12" fill="none" stroke="#9a9a9a" stroke-width="2.6" transform="translate(-1.3,1.6)"/><ellipse cx="822.5" cy="614.5" rx="4.5" ry="6" fill="none" stroke="#9a9a9a" stroke-width="2.4" transform="translate(-1.3,1.6)"/><path d="M839.7,605.7 L850.2,605.7 M844.4,601.5 L844.4,615.5 M839.7,615.5 L849.0,615.5 M840.8,618.3 L849.0,628.1 M847.9,618.3 L839.7,628.1 M853.0,601.5 L851.4,611.3 M851.4,609.9 L861.9,609.9 M859.6,609.9 L851.4,628.1 M852.5,614.1 L861.9,628.1" stroke="#9c9c9c" stroke-width="2.8" transform="translate(-1.4,1.7)"/><path d="M865.0,609.9 L873.2,609.9 M869.7,602.9 L869.7,628.1 M865.0,621.1 L873.2,618.3 M875.5,604.3 L887.2,604.3 M875.5,604.3 L875.5,626.7 M875.5,612.7 L887.2,612.7 M881.4,612.7 L881.4,621.1 M877.9,621.1 L887.2,621.1 M877.9,621.1 L877.9,628.1 M887.2,621.1 L887.2,628.1" stroke="#9c9c9c" stroke-width="2.8" transform="translate(-1.4,1.7)"/><path d="M891.5,611.3 L898.5,611.3 M895.0,604.3 L895.0,623.9 M891.5,625.3 L898.5,621.1 M899.7,608.5 L914.9,608.5 M900.9,608.5 L900.9,628.1 M909.0,601.5 L912.6,628.1 M913.7,615.5 L905.5,626.7" stroke="#9c9c9c" stroke-width="2.8" transform="translate(-1.4,1.7)"/><path d="M920.3,605.7 L920.3,621.1 M924.6,602.9 L924.6,628.1 M927.4,604.9 L941.4,604.9 M928.5,611.3 L940.2,611.3 M928.5,611.3 L928.5,623.9 M940.2,611.3 L940.2,621.1 M934.4,604.9 L934.4,628.1" stroke="#9c9c9c" stroke-width="2.8" transform="translate(-1.4,1.7)"/><path d="M944.5,605.7 L952.7,605.7 M948.0,605.7 L944.5,618.3 M946.4,615.5 L952.7,615.5 M946.4,615.5 L946.4,625.3 M952.7,615.5 L952.7,625.3 M954.3,603.7 L967.9,603.7 M956.2,608.5 L966.7,608.5 M956.2,608.5 L956.2,618.3 M966.7,608.5 L966.7,618.3 M956.2,618.3 L966.7,618.3 M961.3,603.7 L961.3,618.3 M958.5,619.7 L967.9,628.1 M965.6,619.7 L955.0,628.1" stroke="#9c9c9c" stroke-width="2.8" transform="translate(-1.4,1.7)"/><path d="M978.0,601.5 L971.0,615.5 M975.2,609.9 L975.2,628.1 M982.7,602.9 L980.4,611.3 M981.5,609.9 L993.2,609.9 M979.2,618.3 L994.4,618.3 M986.9,601.5 L986.9,628.1" stroke="#9c9c9c" stroke-width="2.8" transform="translate(-1.4,1.7)"/><path d="M998.7,607.1 L1008.0,607.1 M1003.4,607.1 L1003.4,622.5 M997.5,623.9 L1008.0,619.7 M1011.5,602.9 L1009.2,612.7 M1010.4,609.9 L1020.9,609.9 M1018.6,609.9 L1010.4,628.1 M1011.5,612.7 L1020.9,628.1" stroke="#9c9c9c" stroke-width="2.8" transform="translate(-1.4,1.7)"/><path d="M1024.0,611.3 L1031.0,611.3 M1027.5,604.3 L1027.5,623.9 M1024.0,625.3 L1031.0,621.1 M1032.2,608.5 L1047.4,608.5 M1033.4,608.5 L1033.4,628.1 M1041.5,601.5 L1045.1,628.1 M1046.2,615.5 L1038.0,626.7" stroke="#9c9c9c" stroke-width="2.8" transform="translate(-1.4,1.7)"/><path d="M733.5,604.3 L731.2,612.7 M731.2,611.3 L741.7,611.3 M730.0,618.3 L741.7,618.3 M736.6,604.3 L736.6,618.3 M736.6,618.3 L731.2,628.1 M737.0,619.7 L741.7,626.7 M743.6,609.9 L752.2,609.9 M743.6,609.9 L743.6,625.3 M752.2,609.9 L752.2,625.3 M743.6,625.3 L752.2,625.3" stroke="#ffffff" stroke-width="2.8"/><path d="M758.8,605.7 L777.6,604.9 M762.4,609.9 L765.9,614.1 M774.0,609.3 L770.5,614.1 M756.5,616.9 L779.9,616.9 M768.2,605.7 L768.2,626.7 M768.2,626.7 L763.5,625.3" stroke="#ffffff" stroke-width="2.8"/><path d="M784.2,607.1 L793.5,607.1 M788.9,607.1 L788.9,622.5 M783.0,623.9 L793.5,619.7 M797.0,602.9 L794.7,612.7 M795.9,609.9 L806.4,609.9 M804.1,609.9 L795.9,628.1 M797.0,612.7 L806.4,628.1" stroke="#ffffff" stroke-width="2.8"/><ellipse cx="822.5" cy="614.5" rx="11" ry="12" fill="none" stroke="#ffffff" stroke-width="2.6"/><ellipse cx="822.5" cy="614.5" rx="4.5" ry="6" fill="none" stroke="#ffffff" stroke-width="2.4"/><path d="M839.7,605.7 L850.2,605.7 M844.4,601.5 L844.4,615.5 M839.7,615.5 L849.0,615.5 M840.8,618.3 L849.0,628.1 M847.9,618.3 L839.7,628.1 M853.0,601.5 L851.4,611.3 M851.4,609.9 L861.9,609.9 M859.6,609.9 L851.4,628.1 M852.5,614.1 L861.9,628.1" stroke="#ffffff" stroke-width="2.8"/><path d="M865.0,609.9 L873.2,609.9 M869.7,602.9 L869.7,628.1 M865.0,621.1 L873.2,618.3 M875.5,604.3 L887.2,604.3 M875.5,604.3 L875.5,626.7 M875.5,612.7 L887.2,612.7 M881.4,612.7 L881.4,621.1 M877.9,621.1 L887.2,621.1 M877.9,621.1 L877.9,628.1 M887.2,621.1 L887.2,628.1" stroke="#ffffff" stroke-width="2.8"/><path d="M891.5,611.3 L898.5,611.3 M895.0,604.3 L895.0,623.9 M891.5,625.3 L898.5,621.1 M899.7,608.5 L914.9,608.5 M900.9,608.5 L900.9,628.1 M909.0,601.5 L912.6,628.1 M913.7,615.5 L905.5,626.7" stroke="#ffffff" stroke-width="2.8"/><path d="M920.3,605.7 L920.3,621.1 M924.6,602.9 L924.6,628.1 M927.4,604.9 L941.4,604.9 M928.5,611.3 L940.2,611.3 M928.5,611.3 L928.5,623.9 M940.2,611.3 L940.2,621.1 M934.4,604.9 L934.4,628.1" stroke="#ffffff" stroke-width="2.8"/><path d="M944.5,605.7 L952.7,605.7 M948.0,605.7 L944.5,618.3 M946.4,615.5 L952.7,615.5 M946.4,615.5 L946.4,625.3 M952.7,615.5 L952.7,625.3 M954.3,603.7 L967.9,603.7 M956.2,608.5 L966.7,608.5 M956.2,608.5 L956.2,618.3 M966.7,608.5 L966.7,618.3 M956.2,618.3 L966.7,618.3 M961.3,603.7 L961.3,618.3 M958.5,619.7 L967.9,628.1 M965.6,619.7 L955.0,628.1" stroke="#ffffff" stroke-width="2.8"/><path d="M978.0,601.5 L971.0,615.5 M975.2,609.9 L975.2,628.1 M982.7,602.9 L980.4,611.3 M981.5,609.9 L993.2,609.9 M979.2,618.3 L994.4,618.3 M986.9,601.5 L986.9,628.1" stroke="#ffffff" stroke-width="2.8"/><path d="M998.7,607.1 L1008.0,607.1 M1003.4,607.1 L1003.4,622.5 M997.5,623.9 L1008.0,619.7 M1011.5,602.9 L1009.2,612.7 M1010.4,609.9 L1020.9,609.9 M1018.6,609.9 L1010.4,628.1 M1011.5,612.7 L1020.9,628.1" stroke="#ffffff" stroke-width="2.8"/><path d="M1024.0,611.3 L1031.0,611.3 M1027.5,604.3 L1027.5,623.9 M1024.0,625.3 L1031.0,621.1 M1032.2,608.5 L1047.4,608.5 M1033.4,608.5 L1033.4,628.1 M1041.5,601.5 L1045.1,628.1 M1046.2,615.5 L1038.0,626.7" stroke="#ffffff" stroke-width="2.8"/></g>
</g>
</svg>
<!-- title bar -->
<svg class="abs" style="left:0;top:0" width="170" height="23" viewBox="0 0 170 23">
  <path d="M7,8 L9.3,4.3 L15,7.6 L15,15 L10,18 L7.2,16.3 L7.2,12.8 L10,11 L10.8,12.5 L9.5,14.8" stroke="#cdbd86" stroke-width="2.2" fill="none" stroke-linejoin="round"/>
  <rect x="30" y="5" width="11" height="12" fill="#8a8ec8"/><rect x="32" y="6" width="7" height="4" fill="#e8e8f8"/><rect x="32.5" y="12" width="6" height="4" fill="#e0e0f0"/>
  <rect x="53" y="6" width="10" height="11" fill="#8c8c8c"/><rect x="55" y="4" width="9" height="3" fill="#9a9a9a"/><rect x="54.5" y="9" width="6" height="3" fill="#c8c8c8"/>
  <path d="M75,8 L80,8 L81,9 L87,9 L87,17 L75,17 Z" fill="#d9b04a"/><path d="M76,11 L88,11 L86,17 L75,17 Z" fill="#f0cc68"/>
  <rect x="99" y="5" width="9" height="8" fill="#8ab0d8"/><path d="M97,10 L101,10 L102,11 L109,11 L109,17 L97,17 Z" fill="#dcb050"/>
  <path d="M124,10 L128,6.5 L128,8.5 C131,8.5 133,10 133,13 C132,11 130,10.5 128,10.5 L128,12.5 Z" fill="#6c6c6c"/>
  <path d="M154,10 L150,6.5 L150,8.5 C147,8.5 145,10 145,13 C146,11 148,10.5 150,10.5 L150,12.5 Z" fill="#6c6c6c"/>
</svg>
<div class="abs" style="left:635px;top:3px;font-size:13.37px;color:#e2e2e2;white-space:nowrap">test.SchDoc - Altium Designer (21.6.1)</div>
<!-- menu -->
<div class="mi" style="left:8px;top:28px"><u>F</u>ile</div>
<div class="mi" style="left:42px;top:28px"><u>E</u>dit</div>
<div class="mi" style="left:77px;top:28px"><u>V</u>iew</div>
<div class="mi" style="left:120px;top:28px">Proje<u>c</u>t</div>
<div class="mi" style="left:176px;top:28px"><u>P</u>lace</div>
<div class="mi" style="left:220px;top:28px"><u>D</u>esign</div>
<div class="mi" style="left:273px;top:28px"><u>T</u>ools</div>
<div class="mi" style="left:320px;top:28px"><u>S</u>imulate</div>
<div class="mi" style="left:385px;top:28px"><u>R</u>eports</div>
<div class="mi" style="left:446px;top:28px"><u>W</u>indow</div>
<div class="mi" style="left:508px;top:28px"><u>H</u>elp</div>
<!-- panel header -->
<div class="abs" style="left:8px;top:55px;font-size:12.2px;font-weight:bold;color:#e8e8e8">Projects</div>
<svg class="abs" style="left:315px;top:52px" width="52" height="20" viewBox="0 0 52 20">
  <path d="M5,9 L12.5,9 L8.75,13.5 Z" fill="#ececec"/>
  <path d="M22,6 L28,6 L28,7 L27,7 L27,11 L29,12 L21,12 L23,11 L23,7 L22,7 Z M24.5,12 L25.5,12 L25.5,15 L24.5,15 Z" fill="#e0e0e0"/>
  <path d="M38.5,8 L43.5,13 M43.5,8 L38.5,13" stroke="#ececec" stroke-width="1.8"/>
</svg>
<!-- panel toolbar icons -->
<svg class="abs" style="left:10px;top:82px" width="140" height="24" viewBox="0 0 140 24">
  <rect x="9" y="6" width="11" height="11" fill="#8c8c8c"/><rect x="11" y="7" width="7" height="3" fill="#c0c0c0"/><rect x="11" y="12" width="7" height="4" fill="#bdbdbd"/>
  <rect x="34" y="8" width="9" height="10" fill="#8a8a8a"/><path d="M36,5 L43,5 L45,7 L45,15 L43,15 L43,8 L36,8 Z" fill="#a0a0a0"/>
  <rect x="58" y="7" width="11" height="7" fill="#909090"/><path d="M62,12 L72,12 L72,15 L67,18 L62,15 Z" fill="#a8a8a8"/>
  <rect x="85" y="6" width="9" height="11" fill="#8a8a8a"/><circle cx="94" cy="15" r="3.5" fill="#3c3c3c" stroke="#9a9a9a" stroke-width="1.3"/>
  <rect x="106" y="4" width="1" height="16" fill="#2a2a2a"/>
  <circle cx="121" cy="13" r="4.5" fill="none" stroke="#b8c8cc" stroke-width="2.6"/>
</svg>
<!-- search -->
<svg class="abs" style="left:22px;top:118px" width="14" height="16" viewBox="0 0 14 16">
  <circle cx="6" cy="6.5" r="4" fill="none" stroke="#d0d0d0" stroke-width="1.6"/><path d="M9,9.5 L12.5,13" stroke="#d0d0d0" stroke-width="1.8"/>
</svg>
<div class="abs" style="left:38px;top:120px;font-size:11.2px;color:#d2d2d2">Search</div>
<!-- tree -->
<div class="abs" style="left:30px;top:154px;width:323px;height:18px;border:1px solid #6e7478;background:#3c3c3c"></div>
<div class="abs" style="left:42px;top:172px;width:311px;height:18px;background:#505050"></div>
<div class="abs" style="left:66px;top:208px;width:287px;height:18px;background:#6383a6"></div>
<svg class="abs" style="left:14px;top:152px" width="60" height="74" viewBox="0 0 60 74">
  <rect x="4" y="5" width="9" height="9" fill="#d8c8a0"/><rect x="2" y="9" width="6" height="8" fill="#8aa8d0"/><rect x="8" y="10" width="6" height="8" fill="#c8b888"/>
  <path d="M3.5,33 L8.5,28 L8.5,33 Z" fill="#e0e0e0"/>
  <path d="M16,24 L21,24 L22,25.5 L27,25.5 L27,34 L16,34 Z" fill="#8ec88e"/>
  <path d="M17,51 L21.5,46.5 L21.5,51 Z" fill="#e0e0e0"/>
  <path d="M28,42 L33,42 L34,43.5 L39,43.5 L39,52 L28,52 Z" fill="#8ec88e"/>
  <rect x="39" y="59.5" width="12" height="9" fill="#e6d08a"/><rect x="46" y="63" width="5" height="1" fill="#8a7a4a"/><rect x="46" y="65.5" width="5" height="1" fill="#8a7a4a"/>
</svg>
<div class="abs" style="left:32px;top:155px;font-size:11.75px;font-weight:bold;color:#ececec;white-space:nowrap">Project Group 1.DsnWrk</div>
<div class="abs" style="left:44px;top:174px;font-size:11.6px;font-weight:bold;color:#f0f0f0;white-space:nowrap">Free Documents</div>
<div class="abs" style="left:56px;top:193px;font-size:11.3px;color:#d4d4d4;white-space:nowrap">Source Documents</div>
<div class="abs" style="left:69px;top:211px;font-size:11.25px;color:#eef2f6;white-space:nowrap">test.SchDoc</div>
<svg class="abs" style="left:318px;top:211px" width="12" height="13" viewBox="0 0 12 13">
  <path d="M3,1.5 L7,1.5 L9.5,4 L9.5,11 L3,11 Z" fill="none" stroke="#e0e6ee" stroke-width="1.1"/>
</svg>
<!-- red arrow -->
<svg class="abs" style="left:0;top:200px" width="130" height="130" viewBox="0 200 130 130">
  <path d="M39.5,319 L93,231 L89.5,228.5 L105,216 L101.5,235 L98,233 L41,319.5 Z" fill="#f21c1c"/>
</svg>
<!-- doc tab -->
<svg class="abs" style="left:374px;top:56px" width="16" height="14" viewBox="0 0 16 14">
  <rect x="1" y="2" width="13" height="10" fill="#ecd488"/><rect x="8" y="8" width="6" height="1" fill="#9a8a50"/><rect x="8" y="10" width="6" height="1" fill="#9a8a50"/>
</svg>
<div class="abs" style="left:391px;top:57.5px;font-size:11px;color:#d8d8d8;white-space:nowrap">test.SchDoc</div>
<!-- schematic toolbar icons -->
<svg class="abs" style="left:603px;top:80px" width="376" height="25" viewBox="603 80 376 25">
  <path d="M614,88 L624,88 L620.5,93 L620.5,98 L617.5,98 L617.5,93 Z" fill="#c8e0f0"/>
  <path d="M646,86.5 L646,98.5 M640,92.5 L652,92.5" stroke="#6c7cc8" stroke-width="1.2"/>
  <rect x="667.5" y="87" width="11" height="11" fill="none" stroke="#7a7ac0" stroke-width="1" stroke-dasharray="1.5,1"/>
  <path d="M694,86 L694,99 M696,89 L704,89 M696,92 L704,92 M696,95 L701,95" stroke="#9a9a9a" stroke-width="1.3"/>
  <rect x="712" y="85" width="1" height="16" fill="#2a2a2a"/>
  <rect x="722.5" y="86.5" width="6" height="12" fill="#f0d060"/><path d="M720,89 L731,89 M720,92.5 L731,92.5 M720,96 L731,96" stroke="#b09030" stroke-width="0.8"/>
  <path d="M745,89 C748,87 751,91 758,89 M745,94 C748,92 751,96 758,94" stroke="#5a90d0" stroke-width="1.6" fill="none"/>
  <path d="M777.5,85 L777.5,92 M771,92 L784,92 M773,95 L782,95 M775,98 L780,98" stroke="#c84a3a" stroke-width="1.4" fill="none"/>
  <rect x="798" y="85.5" width="2" height="14" fill="#d8e4f4"/><rect x="802" y="89.5" width="7" height="5" fill="none" stroke="#5a80c0" stroke-width="1"/>
  <rect x="824" y="87" width="13" height="10" fill="#50b0c0"/><rect x="827" y="88.5" width="7" height="7" fill="#58d070"/>
  <path d="M850,88 L859,88 L862.5,92 L859,96 L850,96 Z" fill="#f0c858"/><path d="M862,92 L866,92" stroke="#f0c858" stroke-width="1"/>
  <circle cx="884" cy="92" r="5" fill="none" stroke="#c03838" stroke-width="1.1"/><path d="M876,92 L879,92 M884,89 L884,95" stroke="#c03838" stroke-width="1"/>
  <text x="910" y="99" font-family="Liberation Serif" font-size="17" font-weight="bold" fill="#5a8ad0" text-anchor="middle">A</text>
  <path d="M929.5,96 C929.5,86 941.5,86 941.5,96" stroke="#50607a" stroke-width="1.2" fill="none"/>
  <path d="M962,87.5 L966.5,92 L962,96.5 L957.5,92 Z M954,92 L970,92" stroke="#f0c040" stroke-width="1.3" fill="#f0c040"/>
  <g fill="#e8e8e8"><path d="M653.5,103 L657.5,103 L657.5,99 Z"/><path d="M679.5,103 L683.5,103 L683.5,99 Z"/><path d="M706.5,103 L710.5,103 L710.5,99 Z"/><path d="M760.1,103 L764.1,103 L764.1,99 Z"/><path d="M786.2,103 L790.2,103 L790.2,99 Z"/><path d="M812.5,103 L816.5,103 L816.5,99 Z"/><path d="M838.8,103 L842.8,103 L842.8,99 Z"/><path d="M865.0,103 L869.0,103 L869.0,99 Z"/><path d="M891.3,103 L895.3,103 L895.3,99 Z"/><path d="M917.2,103 L921.2,103 L921.2,99 Z"/><path d="M943.8,103 L947.8,103 L947.8,99 Z"/><path d="M970.1,103 L974.1,103 L974.1,99 Z"/></g>
</svg>

</body></html>
